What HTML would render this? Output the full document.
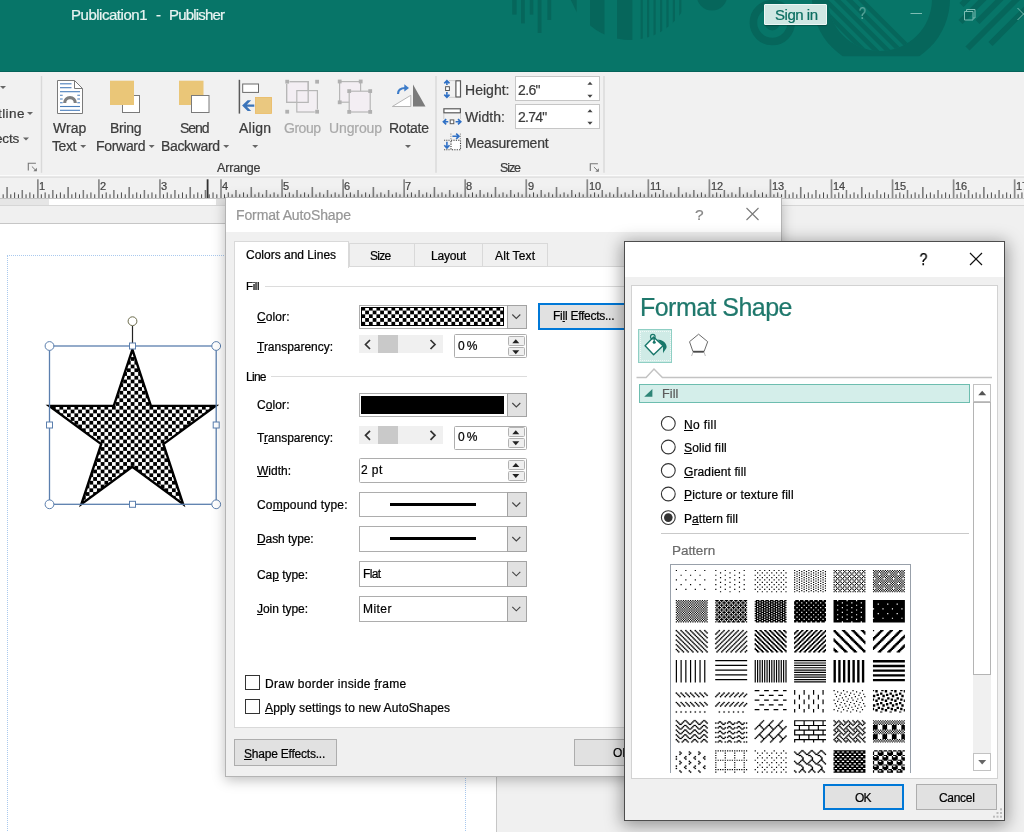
<!DOCTYPE html>
<html>
<head>
<meta charset="utf-8">
<title>Publisher</title>
<style>
*{box-sizing:border-box;margin:0;padding:0}
html,body{width:1024px;height:832px;overflow:hidden;background:#f0f0f0;font-family:"Liberation Sans",sans-serif;font-size:12px;color:#000}
.abs,.t{position:absolute}
.t{white-space:nowrap;line-height:1;will-change:transform;-webkit-text-stroke:.22px currentColor}
u{text-decoration:underline;text-underline-offset:1px;text-decoration-thickness:1px}
#titlebar{position:absolute;left:0;top:0;width:1024px;height:72px;background:#077568;overflow:hidden}
#ribbon{position:absolute;left:0;top:72px;width:1024px;height:103px;background:#f1f1f1;overflow:hidden}
#ruler{position:absolute;left:0;top:175px;width:1024px;height:24px;background:#f1f1f1;overflow:hidden}
#work{position:absolute;left:0;top:199px;width:1024px;height:633px;background:#efefef;overflow:hidden}
#dlg1,#dlg2{position:absolute;left:0;top:0;width:0;height:0}
</style>
</head>
<body>
<div id="titlebar">
<svg class="abs" style="left:0;top:0" width="1024" height="72" viewBox="0 0 1024 72"><defs><clipPath id="cdome"><circle cx="630" cy="-21.7" r="61.7"/></clipPath><clipPath id="cin"><circle cx="880" cy="-1" r="52"/></clipPath><clipPath id="cout"><rect x="800" y="0" width="160" height="56.3"/></clipPath></defs><g fill="#06665b"><rect x="512.2" y="0" width="4.4" height="14.6"/><rect x="521" y="0" width="3.8" height="23.4"/><rect x="529.8" y="0" width="3.5" height="14.6"/><rect x="537.7" y="0" width="3.8" height="33"/><rect x="547.4" y="0" width="3.8" height="20"/><path d="M570.8 0 L576.7 0 L576.7 12.3 Z"/><g clip-path="url(#cdome)"><rect x="590" y="0" width="14.5" height="60"/><rect x="617" y="0" width="15.4" height="60"/><rect x="640.6" y="0" width="2.2" height="60"/><rect x="647" y="0" width="2.2" height="60"/><rect x="653.5" y="0" width="2.2" height="60"/><rect x="660" y="0" width="2.2" height="60"/><rect x="666.4" y="0" width="2.2" height="60"/><rect x="672.8" y="0" width="2.2" height="60"/><rect x="679.2" y="0" width="2.2" height="60"/></g><circle cx="712" cy="-5" r="15.4"/></g><circle cx="772.3" cy="22.6" r="18.9" fill="none" stroke="#06665b" stroke-width="7.6"/><circle cx="772.3" cy="22.6" r="7.8" fill="#06665b"/><g clip-path="url(#cout)"><path fill-rule="evenodd" fill="#06665b" d="M812 -1.2 a69 69 0 1 0 138 0 a69 69 0 1 0 -138 0 Z M828 -1 a52 52 0 1 0 104 0 a52 52 0 1 0 -104 0 Z"/></g><g clip-path="url(#cin)" stroke="#06665b" stroke-width="4.6"><line x1="851.25" y1="-10" x2="931.25" y2="70"/><line x1="839.25" y1="-10" x2="919.25" y2="70"/><line x1="827.25" y1="-10" x2="907.25" y2="70"/><line x1="815.25" y1="-10" x2="895.25" y2="70"/><line x1="803.25" y1="-10" x2="883.25" y2="70"/><line x1="791.25" y1="-10" x2="871.25" y2="70"/><line x1="779.25" y1="-10" x2="859.25" y2="70"/></g><g stroke="#06665b" stroke-width="5.8"><line x1="961.5" y1="5" x2="976.5" y2="-10"/><line x1="960.5" y1="22" x2="992.5" y2="-10"/><line x1="977.5" y1="22" x2="1009.5" y2="-10"/><line x1="967.5" y1="48.5" x2="1026" y2="-10"/><line x1="990.5" y1="44" x2="1044.5" y2="-10"/></g><g fill="none" stroke="#7dbdb3" stroke-width="1"><path d="M910.5 13.5 H922"/><path d="M964.5 11.5 h8.5 v8.5 h-8.5 Z M966.5 11.5 v-2 h8.5 v8.5 h-2"/><path d="M1017.5 8 L1023.5 14 L1017.5 20 M1023.5 14 L1030 8 M1023.5 14 L1030 20"/></g></svg>
<div class="t" style="left:71.00px;top:7.30px;font-size:15.00px;color:#e9f4f2;letter-spacing:-0.475px;">Publication1</div>
<div class="t" style="left:156.20px;top:7.30px;font-size:15.00px;color:#e9f4f2;">-</div>
<div class="t" style="left:169.00px;top:7.30px;font-size:15.00px;color:#e9f4f2;letter-spacing:-0.817px;">Publisher</div>
<div class="abs" style="left:764px;top:4px;width:63px;height:21px;background:#d0e7e3;border:1px solid #eef7f5;border-radius:1px;box-shadow:0 1px 1px rgba(0,0,0,.25)"></div>
<div class="t" style="left:774.50px;top:7.30px;font-size:15.00px;color:#0b6d60;letter-spacing:-0.477px;">Sign in</div>
<div class="t" style="left:857.80px;top:6.46px;font-size:16.00px;color:#58a59a;transform:scaleX(.8);">?</div>
<div class="abs" style="left:0px;top:70.8px;width:1024px;height:1.2px;background:#05635a;"></div>
</div>
<div id="ribbon">
<div class="t" style="left:-2.50px;top:34.57px;font-size:13.50px;color:#3c3c3c;letter-spacing:0.434px;">tline</div>
<div class="t" style="left:-5.00px;top:60.27px;font-size:13.50px;color:#3c3c3c;letter-spacing:-0.153px;">ects</div>
<div class="t" style="left:53.00px;top:48.65px;font-size:14.00px;color:#3c3c3c;letter-spacing:0.035px;">Wrap</div>
<div class="t" style="left:52.00px;top:66.65px;font-size:14.00px;color:#3c3c3c;letter-spacing:-0.392px;">Text</div>
<div class="t" style="left:110.00px;top:48.65px;font-size:14.00px;color:#3c3c3c;letter-spacing:-0.296px;">Bring</div>
<div class="t" style="left:95.70px;top:66.65px;font-size:14.00px;color:#3c3c3c;letter-spacing:-0.308px;">Forward</div>
<div class="t" style="left:180.00px;top:48.65px;font-size:14.00px;color:#3c3c3c;letter-spacing:-1.066px;">Send</div>
<div class="t" style="left:160.70px;top:66.65px;font-size:14.00px;color:#3c3c3c;letter-spacing:-0.353px;">Backward</div>
<div class="t" style="left:239.00px;top:48.65px;font-size:14.00px;color:#3c3c3c;letter-spacing:0.217px;">Align</div>
<div class="t" style="left:283.50px;top:48.65px;font-size:14.00px;color:#a9a9a9;letter-spacing:-0.478px;">Group</div>
<div class="t" style="left:328.50px;top:48.65px;font-size:14.00px;color:#a9a9a9;letter-spacing:-0.117px;">Ungroup</div>
<div class="t" style="left:388.50px;top:48.65px;font-size:14.00px;color:#3c3c3c;letter-spacing:-0.250px;">Rotate</div>
<div class="t" style="left:217.00px;top:90.42px;font-size:12.50px;color:#3c3c3c;letter-spacing:-0.162px;">Arrange</div>
<div class="t" style="left:499.50px;top:90.42px;font-size:12.50px;color:#3c3c3c;letter-spacing:-1.106px;">Size</div>
<div class="t" style="left:465.00px;top:10.65px;font-size:14.00px;color:#3c3c3c;letter-spacing:0.024px;">Height:</div>
<div class="t" style="left:465.00px;top:37.85px;font-size:14.00px;color:#3c3c3c;letter-spacing:0.065px;">Width:</div>
<div class="t" style="left:465.00px;top:63.65px;font-size:14.00px;color:#3c3c3c;letter-spacing:-0.189px;">Measurement</div>
<div class="abs" style="left:514.5px;top:4px;width:85px;height:25px;background:#fff;border:1px solid #c6c6c6;"></div>
<div class="abs" style="left:514.5px;top:31.5px;width:85px;height:25.5px;background:#fff;border:1px solid #c6c6c6;"></div>
<div class="t" style="left:517.50px;top:10.65px;font-size:14.00px;color:#3c3c3c;letter-spacing:-0.644px;">2.6&quot;</div>
<div class="t" style="left:517.50px;top:37.85px;font-size:14.00px;color:#3c3c3c;letter-spacing:-0.754px;">2.74&quot;</div>
<svg class="abs" style="left:0;top:0" width="1024" height="104" viewBox="0 72 1024 104"><path d="M41.5 76 V172.8" stroke="#d9d9d9" stroke-width="1.4"/><path d="M436 76 V172.8" stroke="#d9d9d9" stroke-width="1.4"/><path d="M604 76 V172.8" stroke="#d9d9d9" stroke-width="1.4"/><path d="M0 86 h6 l-3 3 Z" fill="#666"/><path d="M27 112 h6 l-3 3 Z" fill="#666"/><path d="M23 137.5 h6 l-3 3 Z" fill="#666"/><path d="M80.2 145 h6 l-3 3 Z" fill="#666"/><path d="M148.7 145 h6 l-3 3 Z" fill="#666"/><path d="M223.2 145 h6 l-3 3 Z" fill="#666"/><path d="M252.2 145 h6 l-3 3 Z" fill="#666"/><path d="M405 145 h6 l-3 3 Z" fill="#666"/><path d="M587.4 84.8 h5.2 l-2.6 -3 Z" fill="#444"/><path d="M587.4 94.7 h5.2 l-2.6 3 Z" fill="#444"/><path d="M587.4 112.3 h5.2 l-2.6 -3 Z" fill="#444"/><path d="M587.4 121.7 h5.2 l-2.6 3 Z" fill="#444"/><path d="M28.3 170.5 v-7.3 h7.6" fill="none" stroke="#777" stroke-width="1.1"/><path d="M31.9 166.5 l3.2 3.2" fill="none" stroke="#777" stroke-width="1"/><path d="M36.9 171.3 v-3.6 l-3.6 3.6 Z" fill="#777"/><path d="M590.3 171 v-7.3 h7.6" fill="none" stroke="#777" stroke-width="1.1"/><path d="M593.9 167 l3.2 3.2" fill="none" stroke="#777" stroke-width="1"/><path d="M598.9 171.8 v-3.6 l-3.6 3.6 Z" fill="#777"/><path d="M57.5 80.5 H74.5 L82.5 88.5 V113.5 H57.5 Z" fill="#fff" stroke="#7a7a7a" stroke-width="1"/><path d="M74.5 80.5 V88.5 H82.5" fill="none" stroke="#7a7a7a" stroke-width="1"/><path d="M60 83.8 H71.5" stroke="#4a7ebb" stroke-width="1.1"/><path d="M60 87.7 H71.5" stroke="#4a7ebb" stroke-width="1.1"/><path d="M60 91.7 H80" stroke="#4a7ebb" stroke-width="1.1"/><path d="M60 106.5 H80" stroke="#4a7ebb" stroke-width="1.1"/><path d="M60 110.3 H80" stroke="#4a7ebb" stroke-width="1.1"/><path d="M60 95.3 H62.7 M77.3 95.3 H80" stroke="#4a7ebb" stroke-width="1.1"/><path d="M60 99 H62.7 M77.3 99 H80" stroke="#4a7ebb" stroke-width="1.1"/><path d="M60 102.7 H62.7 M77.3 102.7 H80" stroke="#4a7ebb" stroke-width="1.1"/><path d="M63.1 103 a6.9 6.9 0 0 1 13.8 0 h-3.2 a3.7 3.7 0 0 0 -7.4 0 Z" fill="#7f7f7f"/><rect x="122.5" y="95.5" width="17" height="17" fill="#fff" stroke="#7a7a7a"/><rect x="110" y="80.7" width="24" height="24.3" fill="#eac678"/><rect x="179" y="80.7" width="24.5" height="24.3" fill="#eac678"/><rect x="191.5" y="95.5" width="17.5" height="17" fill="#fff" stroke="#7a7a7a"/><path d="M239.4 79.8 V113.6" stroke="#5a5a5a" stroke-width="1.5"/><rect x="242.7" y="84" width="15.8" height="8.4" fill="#fff" stroke="#6a6a6a" stroke-width="1"/><rect x="255.5" y="97.4" width="16" height="16" fill="#eac880" stroke="#eab960" stroke-width=".8"/><path d="M242.1 105.6 L247.6 100.3 H251.2 L247 104.4 H254.3 V106.8 H247 L251.2 110.9 H247.6 Z" fill="#3b74ba"/><rect x="286.6" y="81.6" width="21.6" height="20.8" fill="#f3eef3" stroke="#b7b7b7" stroke-width="1.2"/><rect x="296.8" y="90.6" width="20.6" height="21.4" fill="#f3eef3" fill-opacity=".75" stroke="#b7b7b7" stroke-width="1.2"/><rect x="286.6" y="81.6" width="21.6" height="20.8" fill="none" stroke="#b7b7b7" stroke-width="1.2"/><rect x="284.9" y="79.4" width="4.6" height="4.6" fill="#f1f1f1"/><rect x="285.3" y="79.8" width="3.8" height="3.8" fill="#b0b0b0"/><rect x="314.8" y="79.4" width="4.6" height="4.6" fill="#f1f1f1"/><rect x="315.2" y="79.8" width="3.8" height="3.8" fill="#b0b0b0"/><rect x="284.9" y="109.4" width="4.6" height="4.6" fill="#f1f1f1"/><rect x="285.3" y="109.8" width="3.8" height="3.8" fill="#b0b0b0"/><rect x="314.8" y="109.4" width="4.6" height="4.6" fill="#f1f1f1"/><rect x="315.2" y="109.8" width="3.8" height="3.8" fill="#b0b0b0"/><rect x="339.6" y="81.6" width="21" height="20.6" fill="#f3eef3" stroke="#b7b7b7" stroke-width="1.2"/><rect x="349.2" y="91.2" width="21" height="20.8" fill="#f3eef3" stroke="#b7b7b7" stroke-width="1.2"/><rect x="337.8" y="79.6" width="3.8" height="3.8" fill="#b0b0b0"/><rect x="358.8" y="79.6" width="3.8" height="3.8" fill="#b0b0b0"/><rect x="337.8" y="100.4" width="3.8" height="3.8" fill="#b0b0b0"/><rect x="347.3" y="89.2" width="3.8" height="3.8" fill="#b0b0b0"/><rect x="368.3" y="89.2" width="3.8" height="3.8" fill="#b0b0b0"/><rect x="347.3" y="110" width="3.8" height="3.8" fill="#b0b0b0"/><rect x="368.3" y="110" width="3.8" height="3.8" fill="#b0b0b0"/><path d="M413 84.5 L425.5 106.5 H413 Z" fill="#7b7b7b"/><path d="M410.8 95.3 V106.5 H392.3 Z" fill="#fff" stroke="#b5b5b5" stroke-width="1"/><path d="M398 94 C398 89.5 401.5 88 405.5 88" fill="none" stroke="#3d7cc9" stroke-width="2.1"/><path d="M404.3 84.3 L409 88 L404.3 91.5 Z" fill="#3d7cc9"/><rect x="455.9" y="80.8" width="4.6" height="16.2" fill="#fff" stroke="#5a5a5a" stroke-width="1.2"/><path d="M449.5 80.6 H455 M449.5 97.3 H455" stroke="#aaa" stroke-width="1" stroke-dasharray="1 1"/><path d="M446.9 81 V85 M444.3 83.4 L446.9 80.6 L449.5 83.4 M446.9 92 V97 M444.3 94.6 L446.9 97.4 L449.5 94.6" fill="none" stroke="#2f70c5" stroke-width="1.6"/><rect x="445.6" y="86.7" width="3.8" height="3.8" fill="#fff" stroke="#5a5a5a" stroke-width="1"/><rect x="443.9" y="108.8" width="16.5" height="4" fill="#fff" stroke="#5a5a5a" stroke-width="1.2"/><path d="M443.8 113.5 V119 M460.5 113.5 V119" stroke="#aaa" stroke-width="1" stroke-dasharray="1 1"/><path d="M443.6 121.8 H448.3 M446.2 119.2 L443.4 121.8 L446.2 124.4 M455.6 121.8 H460.6 M458 119.2 L460.8 121.8 L458 124.4" fill="none" stroke="#2f70c5" stroke-width="1.6"/><rect x="450.2" y="119.9" width="3.6" height="3.8" fill="#fff" stroke="#5a5a5a" stroke-width="1"/><rect x="451" y="140.3" width="9.5" height="9.5" fill="#fff" stroke="#333" stroke-width="1.1" stroke-dasharray="1.2 1.2"/><path d="M450.9 133.6 V139.5 M460.4 133.6 V139.5" stroke="#999" stroke-width="1.1" stroke-dasharray="1.2 1"/><path d="M452.4 136.2 H458.6 M456.2 133.6 L459 136.2 L456.2 138.8" fill="none" stroke="#2f70c5" stroke-width="1.6"/><path d="M446.9 141.8 V147.6 M444.3 145.2 L446.9 148 L449.5 145.2" fill="none" stroke="#2f70c5" stroke-width="1.6"/><path d="M444 140.3 H450 M444 149.8 H450" stroke="#555" stroke-width="1.1" stroke-dasharray="1.2 1"/></svg>
</div>
<div id="ruler">
<svg class="abs" style="left:0;top:0" width="1024" height="24" viewBox="0 175 1024 24"><rect x="0" y="175" width="1024" height="1.5" fill="#fbfbfb"/><rect x="0" y="176.4" width="1024" height="1.4" fill="#dedede"/><rect x="-1.16" y="192.4" width="1" height="5.8" fill="#4a4a4a"/><rect x="2.66" y="194.3" width="1" height="3.9" fill="#4a4a4a"/><rect x="6.28" y="187" width="1.6" height="11.2" fill="#7c7c7c"/><rect x="10.29" y="194.3" width="1" height="3.9" fill="#4a4a4a"/><rect x="14.11" y="192.4" width="1" height="5.8" fill="#4a4a4a"/><rect x="17.92" y="194.3" width="1" height="3.9" fill="#4a4a4a"/><rect x="21.54" y="190" width="1.5" height="8.2" fill="#7c7c7c"/><rect x="25.55" y="194.3" width="1" height="3.9" fill="#4a4a4a"/><rect x="29.37" y="192.4" width="1" height="5.8" fill="#4a4a4a"/><rect x="33.18" y="194.3" width="1" height="3.9" fill="#4a4a4a"/><rect x="37.00" y="179.3" width="1.7" height="18.9" fill="#8a8a8a"/><rect x="40.82" y="194.3" width="1" height="3.9" fill="#4a4a4a"/><rect x="44.63" y="192.4" width="1" height="5.8" fill="#4a4a4a"/><rect x="48.45" y="194.3" width="1" height="3.9" fill="#4a4a4a"/><rect x="52.06" y="190" width="1.5" height="8.2" fill="#7c7c7c"/><rect x="56.08" y="194.3" width="1" height="3.9" fill="#4a4a4a"/><rect x="59.89" y="192.4" width="1" height="5.8" fill="#4a4a4a"/><rect x="63.71" y="194.3" width="1" height="3.9" fill="#4a4a4a"/><rect x="67.33" y="187" width="1.6" height="11.2" fill="#7c7c7c"/><rect x="71.34" y="194.3" width="1" height="3.9" fill="#4a4a4a"/><rect x="75.16" y="192.4" width="1" height="5.8" fill="#4a4a4a"/><rect x="78.97" y="194.3" width="1" height="3.9" fill="#4a4a4a"/><rect x="82.59" y="190" width="1.5" height="8.2" fill="#7c7c7c"/><rect x="86.60" y="194.3" width="1" height="3.9" fill="#4a4a4a"/><rect x="90.42" y="192.4" width="1" height="5.8" fill="#4a4a4a"/><rect x="94.23" y="194.3" width="1" height="3.9" fill="#4a4a4a"/><rect x="98.05" y="179.3" width="1.7" height="18.9" fill="#8a8a8a"/><rect x="101.87" y="194.3" width="1" height="3.9" fill="#4a4a4a"/><rect x="105.68" y="192.4" width="1" height="5.8" fill="#4a4a4a"/><rect x="109.50" y="194.3" width="1" height="3.9" fill="#4a4a4a"/><rect x="113.11" y="190" width="1.5" height="8.2" fill="#7c7c7c"/><rect x="117.13" y="194.3" width="1" height="3.9" fill="#4a4a4a"/><rect x="120.94" y="192.4" width="1" height="5.8" fill="#4a4a4a"/><rect x="124.76" y="194.3" width="1" height="3.9" fill="#4a4a4a"/><rect x="128.38" y="187" width="1.6" height="11.2" fill="#7c7c7c"/><rect x="132.39" y="194.3" width="1" height="3.9" fill="#4a4a4a"/><rect x="136.21" y="192.4" width="1" height="5.8" fill="#4a4a4a"/><rect x="140.02" y="194.3" width="1" height="3.9" fill="#4a4a4a"/><rect x="143.64" y="190" width="1.5" height="8.2" fill="#7c7c7c"/><rect x="147.65" y="194.3" width="1" height="3.9" fill="#4a4a4a"/><rect x="151.47" y="192.4" width="1" height="5.8" fill="#4a4a4a"/><rect x="155.28" y="194.3" width="1" height="3.9" fill="#4a4a4a"/><rect x="159.10" y="179.3" width="1.7" height="18.9" fill="#8a8a8a"/><rect x="162.92" y="194.3" width="1" height="3.9" fill="#4a4a4a"/><rect x="166.73" y="192.4" width="1" height="5.8" fill="#4a4a4a"/><rect x="170.55" y="194.3" width="1" height="3.9" fill="#4a4a4a"/><rect x="174.16" y="190" width="1.5" height="8.2" fill="#7c7c7c"/><rect x="178.18" y="194.3" width="1" height="3.9" fill="#4a4a4a"/><rect x="181.99" y="192.4" width="1" height="5.8" fill="#4a4a4a"/><rect x="185.81" y="194.3" width="1" height="3.9" fill="#4a4a4a"/><rect x="189.43" y="187" width="1.6" height="11.2" fill="#7c7c7c"/><rect x="193.44" y="194.3" width="1" height="3.9" fill="#4a4a4a"/><rect x="197.26" y="192.4" width="1" height="5.8" fill="#4a4a4a"/><rect x="201.07" y="194.3" width="1" height="3.9" fill="#4a4a4a"/><rect x="204.69" y="190" width="1.5" height="8.2" fill="#7c7c7c"/><rect x="208.70" y="194.3" width="1" height="3.9" fill="#4a4a4a"/><rect x="212.52" y="192.4" width="1" height="5.8" fill="#4a4a4a"/><rect x="216.33" y="194.3" width="1" height="3.9" fill="#4a4a4a"/><rect x="220.15" y="179.3" width="1.7" height="18.9" fill="#8a8a8a"/><rect x="223.97" y="194.3" width="1" height="3.9" fill="#4a4a4a"/><rect x="227.78" y="192.4" width="1" height="5.8" fill="#4a4a4a"/><rect x="231.60" y="194.3" width="1" height="3.9" fill="#4a4a4a"/><rect x="235.21" y="190" width="1.5" height="8.2" fill="#7c7c7c"/><rect x="239.23" y="194.3" width="1" height="3.9" fill="#4a4a4a"/><rect x="243.04" y="192.4" width="1" height="5.8" fill="#4a4a4a"/><rect x="246.86" y="194.3" width="1" height="3.9" fill="#4a4a4a"/><rect x="250.47" y="187" width="1.6" height="11.2" fill="#7c7c7c"/><rect x="254.49" y="194.3" width="1" height="3.9" fill="#4a4a4a"/><rect x="258.31" y="192.4" width="1" height="5.8" fill="#4a4a4a"/><rect x="262.12" y="194.3" width="1" height="3.9" fill="#4a4a4a"/><rect x="265.74" y="190" width="1.5" height="8.2" fill="#7c7c7c"/><rect x="269.75" y="194.3" width="1" height="3.9" fill="#4a4a4a"/><rect x="273.57" y="192.4" width="1" height="5.8" fill="#4a4a4a"/><rect x="277.38" y="194.3" width="1" height="3.9" fill="#4a4a4a"/><rect x="281.20" y="179.3" width="1.7" height="18.9" fill="#8a8a8a"/><rect x="285.02" y="194.3" width="1" height="3.9" fill="#4a4a4a"/><rect x="288.83" y="192.4" width="1" height="5.8" fill="#4a4a4a"/><rect x="292.65" y="194.3" width="1" height="3.9" fill="#4a4a4a"/><rect x="296.26" y="190" width="1.5" height="8.2" fill="#7c7c7c"/><rect x="300.28" y="194.3" width="1" height="3.9" fill="#4a4a4a"/><rect x="304.09" y="192.4" width="1" height="5.8" fill="#4a4a4a"/><rect x="307.91" y="194.3" width="1" height="3.9" fill="#4a4a4a"/><rect x="311.52" y="187" width="1.6" height="11.2" fill="#7c7c7c"/><rect x="315.54" y="194.3" width="1" height="3.9" fill="#4a4a4a"/><rect x="319.36" y="192.4" width="1" height="5.8" fill="#4a4a4a"/><rect x="323.17" y="194.3" width="1" height="3.9" fill="#4a4a4a"/><rect x="326.79" y="190" width="1.5" height="8.2" fill="#7c7c7c"/><rect x="330.80" y="194.3" width="1" height="3.9" fill="#4a4a4a"/><rect x="334.62" y="192.4" width="1" height="5.8" fill="#4a4a4a"/><rect x="338.43" y="194.3" width="1" height="3.9" fill="#4a4a4a"/><rect x="342.25" y="179.3" width="1.7" height="18.9" fill="#8a8a8a"/><rect x="346.07" y="194.3" width="1" height="3.9" fill="#4a4a4a"/><rect x="349.88" y="192.4" width="1" height="5.8" fill="#4a4a4a"/><rect x="353.70" y="194.3" width="1" height="3.9" fill="#4a4a4a"/><rect x="357.31" y="190" width="1.5" height="8.2" fill="#7c7c7c"/><rect x="361.33" y="194.3" width="1" height="3.9" fill="#4a4a4a"/><rect x="365.14" y="192.4" width="1" height="5.8" fill="#4a4a4a"/><rect x="368.96" y="194.3" width="1" height="3.9" fill="#4a4a4a"/><rect x="372.57" y="187" width="1.6" height="11.2" fill="#7c7c7c"/><rect x="376.59" y="194.3" width="1" height="3.9" fill="#4a4a4a"/><rect x="380.41" y="192.4" width="1" height="5.8" fill="#4a4a4a"/><rect x="384.22" y="194.3" width="1" height="3.9" fill="#4a4a4a"/><rect x="387.84" y="190" width="1.5" height="8.2" fill="#7c7c7c"/><rect x="391.85" y="194.3" width="1" height="3.9" fill="#4a4a4a"/><rect x="395.67" y="192.4" width="1" height="5.8" fill="#4a4a4a"/><rect x="399.48" y="194.3" width="1" height="3.9" fill="#4a4a4a"/><rect x="403.30" y="179.3" width="1.7" height="18.9" fill="#8a8a8a"/><rect x="407.12" y="194.3" width="1" height="3.9" fill="#4a4a4a"/><rect x="410.93" y="192.4" width="1" height="5.8" fill="#4a4a4a"/><rect x="414.75" y="194.3" width="1" height="3.9" fill="#4a4a4a"/><rect x="418.36" y="190" width="1.5" height="8.2" fill="#7c7c7c"/><rect x="422.38" y="194.3" width="1" height="3.9" fill="#4a4a4a"/><rect x="426.19" y="192.4" width="1" height="5.8" fill="#4a4a4a"/><rect x="430.01" y="194.3" width="1" height="3.9" fill="#4a4a4a"/><rect x="433.62" y="187" width="1.6" height="11.2" fill="#7c7c7c"/><rect x="437.64" y="194.3" width="1" height="3.9" fill="#4a4a4a"/><rect x="441.46" y="192.4" width="1" height="5.8" fill="#4a4a4a"/><rect x="445.27" y="194.3" width="1" height="3.9" fill="#4a4a4a"/><rect x="448.89" y="190" width="1.5" height="8.2" fill="#7c7c7c"/><rect x="452.90" y="194.3" width="1" height="3.9" fill="#4a4a4a"/><rect x="456.72" y="192.4" width="1" height="5.8" fill="#4a4a4a"/><rect x="460.53" y="194.3" width="1" height="3.9" fill="#4a4a4a"/><rect x="464.35" y="179.3" width="1.7" height="18.9" fill="#8a8a8a"/><rect x="468.17" y="194.3" width="1" height="3.9" fill="#4a4a4a"/><rect x="471.98" y="192.4" width="1" height="5.8" fill="#4a4a4a"/><rect x="475.80" y="194.3" width="1" height="3.9" fill="#4a4a4a"/><rect x="479.41" y="190" width="1.5" height="8.2" fill="#7c7c7c"/><rect x="483.43" y="194.3" width="1" height="3.9" fill="#4a4a4a"/><rect x="487.24" y="192.4" width="1" height="5.8" fill="#4a4a4a"/><rect x="491.06" y="194.3" width="1" height="3.9" fill="#4a4a4a"/><rect x="494.68" y="187" width="1.6" height="11.2" fill="#7c7c7c"/><rect x="498.69" y="194.3" width="1" height="3.9" fill="#4a4a4a"/><rect x="502.51" y="192.4" width="1" height="5.8" fill="#4a4a4a"/><rect x="506.32" y="194.3" width="1" height="3.9" fill="#4a4a4a"/><rect x="509.94" y="190" width="1.5" height="8.2" fill="#7c7c7c"/><rect x="513.95" y="194.3" width="1" height="3.9" fill="#4a4a4a"/><rect x="517.77" y="192.4" width="1" height="5.8" fill="#4a4a4a"/><rect x="521.58" y="194.3" width="1" height="3.9" fill="#4a4a4a"/><rect x="525.40" y="179.3" width="1.7" height="18.9" fill="#8a8a8a"/><rect x="529.22" y="194.3" width="1" height="3.9" fill="#4a4a4a"/><rect x="533.03" y="192.4" width="1" height="5.8" fill="#4a4a4a"/><rect x="536.85" y="194.3" width="1" height="3.9" fill="#4a4a4a"/><rect x="540.46" y="190" width="1.5" height="8.2" fill="#7c7c7c"/><rect x="544.48" y="194.3" width="1" height="3.9" fill="#4a4a4a"/><rect x="548.29" y="192.4" width="1" height="5.8" fill="#4a4a4a"/><rect x="552.11" y="194.3" width="1" height="3.9" fill="#4a4a4a"/><rect x="555.72" y="187" width="1.6" height="11.2" fill="#7c7c7c"/><rect x="559.74" y="194.3" width="1" height="3.9" fill="#4a4a4a"/><rect x="563.56" y="192.4" width="1" height="5.8" fill="#4a4a4a"/><rect x="567.37" y="194.3" width="1" height="3.9" fill="#4a4a4a"/><rect x="570.99" y="190" width="1.5" height="8.2" fill="#7c7c7c"/><rect x="575.00" y="194.3" width="1" height="3.9" fill="#4a4a4a"/><rect x="578.82" y="192.4" width="1" height="5.8" fill="#4a4a4a"/><rect x="582.63" y="194.3" width="1" height="3.9" fill="#4a4a4a"/><rect x="586.45" y="179.3" width="1.7" height="18.9" fill="#8a8a8a"/><rect x="590.27" y="194.3" width="1" height="3.9" fill="#4a4a4a"/><rect x="594.08" y="192.4" width="1" height="5.8" fill="#4a4a4a"/><rect x="597.90" y="194.3" width="1" height="3.9" fill="#4a4a4a"/><rect x="601.51" y="190" width="1.5" height="8.2" fill="#7c7c7c"/><rect x="605.53" y="194.3" width="1" height="3.9" fill="#4a4a4a"/><rect x="609.34" y="192.4" width="1" height="5.8" fill="#4a4a4a"/><rect x="613.16" y="194.3" width="1" height="3.9" fill="#4a4a4a"/><rect x="616.77" y="187" width="1.6" height="11.2" fill="#7c7c7c"/><rect x="620.79" y="194.3" width="1" height="3.9" fill="#4a4a4a"/><rect x="624.61" y="192.4" width="1" height="5.8" fill="#4a4a4a"/><rect x="628.42" y="194.3" width="1" height="3.9" fill="#4a4a4a"/><rect x="632.04" y="190" width="1.5" height="8.2" fill="#7c7c7c"/><rect x="636.05" y="194.3" width="1" height="3.9" fill="#4a4a4a"/><rect x="639.87" y="192.4" width="1" height="5.8" fill="#4a4a4a"/><rect x="643.68" y="194.3" width="1" height="3.9" fill="#4a4a4a"/><rect x="647.50" y="179.3" width="1.7" height="18.9" fill="#8a8a8a"/><rect x="651.32" y="194.3" width="1" height="3.9" fill="#4a4a4a"/><rect x="655.13" y="192.4" width="1" height="5.8" fill="#4a4a4a"/><rect x="658.95" y="194.3" width="1" height="3.9" fill="#4a4a4a"/><rect x="662.56" y="190" width="1.5" height="8.2" fill="#7c7c7c"/><rect x="666.58" y="194.3" width="1" height="3.9" fill="#4a4a4a"/><rect x="670.39" y="192.4" width="1" height="5.8" fill="#4a4a4a"/><rect x="674.21" y="194.3" width="1" height="3.9" fill="#4a4a4a"/><rect x="677.82" y="187" width="1.6" height="11.2" fill="#7c7c7c"/><rect x="681.84" y="194.3" width="1" height="3.9" fill="#4a4a4a"/><rect x="685.66" y="192.4" width="1" height="5.8" fill="#4a4a4a"/><rect x="689.47" y="194.3" width="1" height="3.9" fill="#4a4a4a"/><rect x="693.09" y="190" width="1.5" height="8.2" fill="#7c7c7c"/><rect x="697.10" y="194.3" width="1" height="3.9" fill="#4a4a4a"/><rect x="700.92" y="192.4" width="1" height="5.8" fill="#4a4a4a"/><rect x="704.73" y="194.3" width="1" height="3.9" fill="#4a4a4a"/><rect x="708.55" y="179.3" width="1.7" height="18.9" fill="#8a8a8a"/><rect x="712.37" y="194.3" width="1" height="3.9" fill="#4a4a4a"/><rect x="716.18" y="192.4" width="1" height="5.8" fill="#4a4a4a"/><rect x="720.00" y="194.3" width="1" height="3.9" fill="#4a4a4a"/><rect x="723.61" y="190" width="1.5" height="8.2" fill="#7c7c7c"/><rect x="727.63" y="194.3" width="1" height="3.9" fill="#4a4a4a"/><rect x="731.44" y="192.4" width="1" height="5.8" fill="#4a4a4a"/><rect x="735.26" y="194.3" width="1" height="3.9" fill="#4a4a4a"/><rect x="738.87" y="187" width="1.6" height="11.2" fill="#7c7c7c"/><rect x="742.89" y="194.3" width="1" height="3.9" fill="#4a4a4a"/><rect x="746.71" y="192.4" width="1" height="5.8" fill="#4a4a4a"/><rect x="750.52" y="194.3" width="1" height="3.9" fill="#4a4a4a"/><rect x="754.14" y="190" width="1.5" height="8.2" fill="#7c7c7c"/><rect x="758.15" y="194.3" width="1" height="3.9" fill="#4a4a4a"/><rect x="761.97" y="192.4" width="1" height="5.8" fill="#4a4a4a"/><rect x="765.78" y="194.3" width="1" height="3.9" fill="#4a4a4a"/><rect x="769.60" y="179.3" width="1.7" height="18.9" fill="#8a8a8a"/><rect x="773.42" y="194.3" width="1" height="3.9" fill="#4a4a4a"/><rect x="777.23" y="192.4" width="1" height="5.8" fill="#4a4a4a"/><rect x="781.05" y="194.3" width="1" height="3.9" fill="#4a4a4a"/><rect x="784.66" y="190" width="1.5" height="8.2" fill="#7c7c7c"/><rect x="788.68" y="194.3" width="1" height="3.9" fill="#4a4a4a"/><rect x="792.49" y="192.4" width="1" height="5.8" fill="#4a4a4a"/><rect x="796.31" y="194.3" width="1" height="3.9" fill="#4a4a4a"/><rect x="799.92" y="187" width="1.6" height="11.2" fill="#7c7c7c"/><rect x="803.94" y="194.3" width="1" height="3.9" fill="#4a4a4a"/><rect x="807.76" y="192.4" width="1" height="5.8" fill="#4a4a4a"/><rect x="811.57" y="194.3" width="1" height="3.9" fill="#4a4a4a"/><rect x="815.19" y="190" width="1.5" height="8.2" fill="#7c7c7c"/><rect x="819.20" y="194.3" width="1" height="3.9" fill="#4a4a4a"/><rect x="823.02" y="192.4" width="1" height="5.8" fill="#4a4a4a"/><rect x="826.83" y="194.3" width="1" height="3.9" fill="#4a4a4a"/><rect x="830.65" y="179.3" width="1.7" height="18.9" fill="#8a8a8a"/><rect x="834.47" y="194.3" width="1" height="3.9" fill="#4a4a4a"/><rect x="838.28" y="192.4" width="1" height="5.8" fill="#4a4a4a"/><rect x="842.10" y="194.3" width="1" height="3.9" fill="#4a4a4a"/><rect x="845.71" y="190" width="1.5" height="8.2" fill="#7c7c7c"/><rect x="849.73" y="194.3" width="1" height="3.9" fill="#4a4a4a"/><rect x="853.54" y="192.4" width="1" height="5.8" fill="#4a4a4a"/><rect x="857.36" y="194.3" width="1" height="3.9" fill="#4a4a4a"/><rect x="860.97" y="187" width="1.6" height="11.2" fill="#7c7c7c"/><rect x="864.99" y="194.3" width="1" height="3.9" fill="#4a4a4a"/><rect x="868.81" y="192.4" width="1" height="5.8" fill="#4a4a4a"/><rect x="872.62" y="194.3" width="1" height="3.9" fill="#4a4a4a"/><rect x="876.24" y="190" width="1.5" height="8.2" fill="#7c7c7c"/><rect x="880.25" y="194.3" width="1" height="3.9" fill="#4a4a4a"/><rect x="884.07" y="192.4" width="1" height="5.8" fill="#4a4a4a"/><rect x="887.88" y="194.3" width="1" height="3.9" fill="#4a4a4a"/><rect x="891.70" y="179.3" width="1.7" height="18.9" fill="#8a8a8a"/><rect x="895.52" y="194.3" width="1" height="3.9" fill="#4a4a4a"/><rect x="899.33" y="192.4" width="1" height="5.8" fill="#4a4a4a"/><rect x="903.15" y="194.3" width="1" height="3.9" fill="#4a4a4a"/><rect x="906.76" y="190" width="1.5" height="8.2" fill="#7c7c7c"/><rect x="910.78" y="194.3" width="1" height="3.9" fill="#4a4a4a"/><rect x="914.59" y="192.4" width="1" height="5.8" fill="#4a4a4a"/><rect x="918.41" y="194.3" width="1" height="3.9" fill="#4a4a4a"/><rect x="922.02" y="187" width="1.6" height="11.2" fill="#7c7c7c"/><rect x="926.04" y="194.3" width="1" height="3.9" fill="#4a4a4a"/><rect x="929.86" y="192.4" width="1" height="5.8" fill="#4a4a4a"/><rect x="933.67" y="194.3" width="1" height="3.9" fill="#4a4a4a"/><rect x="937.29" y="190" width="1.5" height="8.2" fill="#7c7c7c"/><rect x="941.30" y="194.3" width="1" height="3.9" fill="#4a4a4a"/><rect x="945.12" y="192.4" width="1" height="5.8" fill="#4a4a4a"/><rect x="948.93" y="194.3" width="1" height="3.9" fill="#4a4a4a"/><rect x="952.75" y="179.3" width="1.7" height="18.9" fill="#8a8a8a"/><rect x="956.57" y="194.3" width="1" height="3.9" fill="#4a4a4a"/><rect x="960.38" y="192.4" width="1" height="5.8" fill="#4a4a4a"/><rect x="964.20" y="194.3" width="1" height="3.9" fill="#4a4a4a"/><rect x="967.81" y="190" width="1.5" height="8.2" fill="#7c7c7c"/><rect x="971.83" y="194.3" width="1" height="3.9" fill="#4a4a4a"/><rect x="975.64" y="192.4" width="1" height="5.8" fill="#4a4a4a"/><rect x="979.46" y="194.3" width="1" height="3.9" fill="#4a4a4a"/><rect x="983.07" y="187" width="1.6" height="11.2" fill="#7c7c7c"/><rect x="987.09" y="194.3" width="1" height="3.9" fill="#4a4a4a"/><rect x="990.91" y="192.4" width="1" height="5.8" fill="#4a4a4a"/><rect x="994.72" y="194.3" width="1" height="3.9" fill="#4a4a4a"/><rect x="998.34" y="190" width="1.5" height="8.2" fill="#7c7c7c"/><rect x="1002.35" y="194.3" width="1" height="3.9" fill="#4a4a4a"/><rect x="1006.17" y="192.4" width="1" height="5.8" fill="#4a4a4a"/><rect x="1009.98" y="194.3" width="1" height="3.9" fill="#4a4a4a"/><rect x="1013.80" y="179.3" width="1.7" height="18.9" fill="#8a8a8a"/><rect x="1017.62" y="194.3" width="1" height="3.9" fill="#4a4a4a"/><rect x="1021.43" y="192.4" width="1" height="5.8" fill="#4a4a4a"/><rect x="1025.25" y="194.3" width="1" height="3.9" fill="#4a4a4a"/><rect x="1028.86" y="190" width="1.5" height="8.2" fill="#7c7c7c"/><rect x="206.7" y="179.3" width="1.8" height="19" fill="#333"/><rect x="0" y="198" width="1024" height="1" fill="#c3c3c3"/></svg>
<div class="t" style="left:39.10px;top:6.29px;font-size:11.00px;color:#444;">1</div>
<div class="t" style="left:100.15px;top:6.29px;font-size:11.00px;color:#444;">2</div>
<div class="t" style="left:161.20px;top:6.29px;font-size:11.00px;color:#444;">3</div>
<div class="t" style="left:222.25px;top:6.29px;font-size:11.00px;color:#444;">4</div>
<div class="t" style="left:283.30px;top:6.29px;font-size:11.00px;color:#444;">5</div>
<div class="t" style="left:344.35px;top:6.29px;font-size:11.00px;color:#444;">6</div>
<div class="t" style="left:405.40px;top:6.29px;font-size:11.00px;color:#444;">7</div>
<div class="t" style="left:466.45px;top:6.29px;font-size:11.00px;color:#444;">8</div>
<div class="t" style="left:527.50px;top:6.29px;font-size:11.00px;color:#444;">9</div>
<div class="t" style="left:588.55px;top:6.29px;font-size:11.00px;color:#444;">10</div>
<div class="t" style="left:649.60px;top:6.29px;font-size:11.00px;color:#444;">11</div>
<div class="t" style="left:710.65px;top:6.29px;font-size:11.00px;color:#444;">12</div>
<div class="t" style="left:771.70px;top:6.29px;font-size:11.00px;color:#444;">13</div>
<div class="t" style="left:832.75px;top:6.29px;font-size:11.00px;color:#444;">14</div>
<div class="t" style="left:893.80px;top:6.29px;font-size:11.00px;color:#444;">15</div>
<div class="t" style="left:954.85px;top:6.29px;font-size:11.00px;color:#444;">16</div>
<div class="t" style="left:1015.90px;top:6.29px;font-size:11.00px;color:#444;">17</div>
</div>
<div id="work">
<div class="abs" style="left:0px;top:0px;width:1024px;height:5.5px;background:#f4f4f4;"></div>
<div class="abs" style="left:0px;top:0px;width:49px;height:5.5px;background:#e6e6e6;"></div>
<div class="abs" style="left:49px;top:0px;width:167px;height:5.5px;background:#fff;"></div>
<div class="abs" style="left:216px;top:0px;width:10px;height:5.5px;background:#e2e2e2;"></div>
<div class="abs" style="left:0px;top:5.5px;width:1024px;height:1px;background:#d6d6d6;"></div>
<div class="abs" style="left:0px;top:6.5px;width:1024px;height:626px;background:#f0f0f0;"></div>
<div class="abs" style="left:-2px;top:24px;width:499px;height:640px;background:#fff;border:1px solid #c6c6c6;"></div>
<div class="abs" style="left:6.5px;top:56px;width:1px;height:600px;border-left:1px dotted #a9c9ee"></div>
<div class="abs" style="left:465px;top:56px;width:1px;height:600px;border-left:1px dotted #a9c9ee"></div>
<div class="abs" style="left:6.5px;top:56px;width:459px;height:1px;border-top:1px dotted #a9c9ee"></div>
<svg class="abs" style="left:0;top:0" width="260" height="633" viewBox="0 199 260 633"><defs><pattern id="chk" x="3.2" y="4.6" width="7.5" height="7.5" patternUnits="userSpaceOnUse"><rect width="7.5" height="7.5" fill="#fff"/><rect x="0" y="0" width="3.75" height="3.75" fill="#000"/><rect x="3.75" y="3.75" width="3.75" height="3.75" fill="#000"/></pattern></defs><polygon points="132.4,349.6 150.9,405.9 215.5,405.9 163.4,444.1 183.1,504.1 132.3,466.8 81.4,504.1 101.2,444.1 49.2,405.9 113.8,405.9" fill="url(#chk)" stroke="#000" stroke-width="2.4" stroke-linejoin="miter"/><rect x="49.5" y="346" width="166.7" height="158.3" fill="none" stroke="#5b7fae" stroke-width="1.3"/><path d="M132.5 326 V346" stroke="#222" stroke-width="1.2"/><circle cx="132.5" cy="321.2" r="4.4" fill="#fff" stroke="#6b6b4b" stroke-width="1"/><circle cx="49.5" cy="346" r="4.4" fill="#fff" stroke="#5b7fae" stroke-width="1"/><circle cx="216.2" cy="346" r="4.4" fill="#fff" stroke="#5b7fae" stroke-width="1"/><circle cx="49.5" cy="504.3" r="4.4" fill="#fff" stroke="#5b7fae" stroke-width="1"/><circle cx="216.2" cy="504.3" r="4.4" fill="#fff" stroke="#5b7fae" stroke-width="1"/><rect x="129.5" y="343" width="6" height="6" fill="#fff" stroke="#5b7fae" stroke-width="1"/><rect x="129.5" y="501.3" width="6" height="6" fill="#fff" stroke="#5b7fae" stroke-width="1"/><rect x="46.5" y="422" width="6" height="6" fill="#fff" stroke="#5b7fae" stroke-width="1"/><rect x="213.2" y="422" width="6" height="6" fill="#fff" stroke="#5b7fae" stroke-width="1"/></svg>
</div>
<div id="dlg1">
<div class="abs" style="left:225px;top:197px;width:557px;height:579.7px;background:#f0f0f0;border:1px solid #b4b4b4;box-shadow:0 3px 12px rgba(0,0,0,.26)"></div>
<div class="abs" style="left:226px;top:198px;width:555px;height:34px;background:#fff;"></div>
<div class="t" style="left:235.50px;top:208.15px;font-size:14.00px;color:#969696;letter-spacing:-0.116px;">Format AutoShape</div>
<div class="t" style="left:694.80px;top:206.58px;font-size:15.50px;color:#858585;">?</div>
<div class="abs" style="left:233.5px;top:266px;width:539px;height:461.5px;background:#fff;border:1px solid #d9d9d9;"></div>
<div class="abs" style="left:348.5px;top:243px;width:66.5px;height:23.5px;background:#f0f0f0;border:1px solid #d9d9d9;"></div>
<div class="abs" style="left:414px;top:243px;width:68.5px;height:23.5px;background:#f0f0f0;border:1px solid #d9d9d9;"></div>
<div class="abs" style="left:481.5px;top:243px;width:66.5px;height:23.5px;background:#f0f0f0;border:1px solid #d9d9d9;"></div>
<div class="abs" style="left:234px;top:241px;width:115px;height:26.5px;background:#fff;border:1px solid #d9d9d9;border-bottom:none"></div>
<div class="t" style="left:245.50px;top:249.34px;font-size:12.00px;color:#000;">Colors and Lines</div>
<div class="t" style="left:370.00px;top:250.34px;font-size:12.00px;color:#000;letter-spacing:-0.715px;">Size</div>
<div class="t" style="left:431.00px;top:250.34px;font-size:12.00px;color:#000;letter-spacing:-0.166px;">Layout</div>
<div class="t" style="left:495.00px;top:250.34px;font-size:12.00px;color:#000;letter-spacing:0.124px;">Alt Text</div>
<div class="t" style="left:245.50px;top:281.27px;font-size:11.50px;color:#000;letter-spacing:-0.363px;">Fill</div>
<div class="abs" style="left:264.5px;top:285.5px;width:500px;height:1px;background:#dcdcdc;"></div>
<div class="t" style="left:256.50px;top:310.84px;font-size:12.00px;color:#000;letter-spacing:0.098px;"><u>C</u>olor:</div>
<div class="abs" style="left:358.5px;top:304.5px;width:168px;height:24px;background:#fff;border:1px solid #adadad;"></div><div class="abs" style="left:507px;top:304.5px;width:19.5px;height:24px;background:#e1e1e1;border:1px solid #a3a3a3;"></div>
<div class="abs" style="left:361px;top:307px;width:142.7px;height:19px;background-color:#fff;background-image:conic-gradient(#000 25%,#fff 0 50%,#000 0 75%,#fff 0);background-size:7.5px 7.5px;background-position:3.2px -1.2px;border:1px solid #000"></div>
<div class="t" style="left:256.50px;top:341.04px;font-size:12.00px;color:#000;letter-spacing:-0.021px;"><u>T</u>ransparency:</div>
<div class="abs" style="left:358.7px;top:335.2px;width:84px;height:18px;background:#f0f0f0;"></div>
<div class="abs" style="left:378px;top:335.2px;width:20px;height:18px;background:#c9c9c9;"></div>
<div class="abs" style="left:454px;top:334.3px;width:72.5px;height:24px;background:#fff;border:1px solid #adadad;border-radius:1.5px"></div><div class="abs" style="left:507.5px;top:336.1px;width:17.3px;height:9.9px;background:#efefef;border:1px solid #b2b2b2;border-radius:1.5px"></div><div class="abs" style="left:507.5px;top:346.6px;width:17.3px;height:9.9px;background:#efefef;border:1px solid #b2b2b2;border-radius:1.5px"></div>
<div class="t" style="left:457.50px;top:339.84px;font-size:12.00px;color:#000;letter-spacing:-0.589px;">0 %</div>
<div class="abs" style="left:538px;top:302.5px;width:100px;height:27px;background:#e1e1e1;border:2px solid #0078d7;"></div>
<div class="t" style="left:553.00px;top:310.34px;font-size:12.00px;color:#000;letter-spacing:-0.259px;">Fi<u>l</u>l Effects...</div>
<div class="t" style="left:245.50px;top:370.84px;font-size:12.00px;color:#000;letter-spacing:-0.729px;">Line</div>
<div class="abs" style="left:271px;top:375.5px;width:255.5px;height:1px;background:#dcdcdc;"></div>
<div class="t" style="left:256.50px;top:399.34px;font-size:12.00px;color:#000;letter-spacing:0.098px;">C<u>o</u>lor:</div>
<div class="abs" style="left:358.5px;top:393px;width:168px;height:24px;background:#fff;border:1px solid #adadad;"></div><div class="abs" style="left:507px;top:393px;width:19.5px;height:24px;background:#e1e1e1;border:1px solid #a3a3a3;"></div>
<div class="abs" style="left:361px;top:395.5px;width:142.7px;height:18.2px;background:#000;"></div>
<div class="t" style="left:256.50px;top:431.84px;font-size:12.00px;color:#000;letter-spacing:-0.021px;">T<u>r</u>ansparency:</div>
<div class="abs" style="left:358.7px;top:426.2px;width:84px;height:18.3px;background:#f0f0f0;"></div>
<div class="abs" style="left:378px;top:426.2px;width:20px;height:18.3px;background:#c9c9c9;"></div>
<div class="abs" style="left:454px;top:425.5px;width:72.5px;height:24px;background:#fff;border:1px solid #adadad;border-radius:1.5px"></div><div class="abs" style="left:507.5px;top:427.3px;width:17.3px;height:9.9px;background:#efefef;border:1px solid #b2b2b2;border-radius:1.5px"></div><div class="abs" style="left:507.5px;top:437.8px;width:17.3px;height:9.9px;background:#efefef;border:1px solid #b2b2b2;border-radius:1.5px"></div>
<div class="t" style="left:457.50px;top:431.04px;font-size:12.00px;color:#000;letter-spacing:-0.589px;">0 %</div>
<div class="t" style="left:256.50px;top:464.84px;font-size:12.00px;color:#000;"><u>W</u>idth:</div>
<div class="abs" style="left:358.5px;top:458.3px;width:168px;height:24.6px;background:#fff;border:1px solid #adadad;border-radius:1.5px"></div><div class="abs" style="left:507.5px;top:460.1px;width:17.3px;height:10.2px;background:#efefef;border:1px solid #b2b2b2;border-radius:1.5px"></div><div class="abs" style="left:507.5px;top:470.9px;width:17.3px;height:10.2px;background:#efefef;border:1px solid #b2b2b2;border-radius:1.5px"></div>
<div class="t" style="left:361.20px;top:463.54px;font-size:12.00px;color:#000;letter-spacing:0.428px;">2 pt</div>
<div class="t" style="left:256.50px;top:498.54px;font-size:12.00px;color:#000;letter-spacing:0.188px;">Co<u>m</u>pound type:</div>
<div class="abs" style="left:358.5px;top:491.5px;width:168px;height:25.5px;background:#fff;border:1px solid #adadad;"></div><div class="abs" style="left:507px;top:491.5px;width:19.5px;height:25.5px;background:#e1e1e1;border:1px solid #a3a3a3;"></div>
<div class="abs" style="left:389.5px;top:503px;width:86.7px;height:2.5px;background:#000;"></div>
<div class="t" style="left:256.50px;top:533.04px;font-size:12.00px;color:#000;letter-spacing:-0.074px;"><u>D</u>ash type:</div>
<div class="abs" style="left:358.5px;top:526.3px;width:168px;height:25.5px;background:#fff;border:1px solid #adadad;"></div><div class="abs" style="left:507px;top:526.3px;width:19.5px;height:25.5px;background:#e1e1e1;border:1px solid #a3a3a3;"></div>
<div class="abs" style="left:389.5px;top:537px;width:86.7px;height:2.5px;background:#000;"></div>
<div class="t" style="left:256.50px;top:568.54px;font-size:12.00px;color:#000;letter-spacing:-0.045px;">Ca<u>p</u> type:</div>
<div class="abs" style="left:358.5px;top:561px;width:168px;height:25.5px;background:#fff;border:1px solid #adadad;"></div><div class="abs" style="left:507px;top:561px;width:19.5px;height:25.5px;background:#e1e1e1;border:1px solid #a3a3a3;"></div>
<div class="t" style="left:362.50px;top:568.04px;font-size:12.00px;color:#000;letter-spacing:-0.601px;">Flat</div>
<div class="t" style="left:256.50px;top:603.34px;font-size:12.00px;color:#000;letter-spacing:-0.040px;"><u>J</u>oin type:</div>
<div class="abs" style="left:358.5px;top:596px;width:168px;height:25.5px;background:#fff;border:1px solid #adadad;"></div><div class="abs" style="left:507px;top:596px;width:19.5px;height:25.5px;background:#e1e1e1;border:1px solid #a3a3a3;"></div>
<div class="t" style="left:362.50px;top:603.14px;font-size:12.00px;color:#000;letter-spacing:0.458px;">Miter</div>
<div class="abs" style="left:245px;top:675px;width:15px;height:15px;background:#fff;border:1px solid #333;"></div>
<div class="t" style="left:265.00px;top:678.04px;font-size:12.00px;color:#000;letter-spacing:0.282px;">Draw border inside <u>f</u>rame</div>
<div class="abs" style="left:245px;top:698.7px;width:15px;height:15px;background:#fff;border:1px solid #333;"></div>
<div class="t" style="left:265.00px;top:701.54px;font-size:12.00px;color:#000;letter-spacing:0.114px;"><u>A</u>pply settings to new AutoShapes</div>
<div class="abs" style="left:234px;top:739px;width:103px;height:27px;background:#e1e1e1;border:1px solid #adadad;"></div>
<div class="t" style="left:244.20px;top:747.84px;font-size:12.00px;color:#000;letter-spacing:-0.213px;"><u>S</u>hape Effects...</div>
<div class="abs" style="left:574px;top:739px;width:90px;height:27px;background:#e1e1e1;border:1px solid #adadad;"></div>
<div class="t" style="left:612.50px;top:747.34px;font-size:12.00px;color:#000;">OK</div>
<svg class="abs" style="left:0;top:0;overflow:visible" width="1024" height="832" viewBox="0 0 1024 832"><path d="M746.5 208 l12 12 m0 -12 l-12 12" stroke="#7a7a7a" stroke-width="1.1" fill="none"/><path d="M512.3 314.5 l4 4 l4 -4" fill="none" stroke="#444" stroke-width="1.1"/><path d="M512.3 403 l4 4 l4 -4" fill="none" stroke="#444" stroke-width="1.1"/><path d="M512.3 502.5 l4 4 l4 -4" fill="none" stroke="#444" stroke-width="1.1"/><path d="M512.3 537 l4 4 l4 -4" fill="none" stroke="#444" stroke-width="1.1"/><path d="M512.3 571.8 l4 4 l4 -4" fill="none" stroke="#444" stroke-width="1.1"/><path d="M512.3 606.8 l4 4 l4 -4" fill="none" stroke="#444" stroke-width="1.1"/><path d="M370 340 l-4.5 4.5 l4.5 4.5" fill="none" stroke="#333" stroke-width="1.7"/><path d="M430.5 340 l4.5 4.5 l-4.5 4.5" fill="none" stroke="#333" stroke-width="1.7"/><path d="M370 430.8 l-4.5 4.5 l4.5 4.5" fill="none" stroke="#333" stroke-width="1.7"/><path d="M430.5 430.8 l4.5 4.5 l-4.5 4.5" fill="none" stroke="#333" stroke-width="1.7"/><path d="M512.3 343.3 h7 l-3.5 -4 Z" fill="#222"/><path d="M512.3 350.2 h7 l-3.5 4 Z" fill="#222"/><path d="M512.3 434.3 h7 l-3.5 -4 Z" fill="#222"/><path d="M512.3 441.2 h7 l-3.5 4 Z" fill="#222"/><path d="M512.3 467.1 h7 l-3.5 -4 Z" fill="#222"/><path d="M512.3 474 h7 l-3.5 4 Z" fill="#222"/></svg>
</div>
<div id="dlg2">
<div class="abs" style="left:624px;top:241px;width:380.6px;height:579.5px;background:#f0f0f0;border:1px solid #4d4d4d;box-shadow:0 3px 16px 2px rgba(0,0,0,.38)"></div>
<div class="abs" style="left:625px;top:242px;width:378.6px;height:35px;background:#fff;"></div>
<div class="t" style="left:918.60px;top:252.36px;font-size:16.00px;color:#000;transform:scaleX(.86);-webkit-text-stroke:.25px #000;">?</div>
<div class="abs" style="left:631px;top:285px;width:367px;height:494px;background:#fff;border:1px solid #d2d2d2;"></div>
<div class="t" style="left:640.00px;top:295.14px;font-size:25.00px;color:#1f786c;letter-spacing:-0.537px;">Format Shape</div>
<div class="abs" style="left:638px;top:329px;width:34px;height:33.5px;background:#cfebe6;border:1px solid #8fcfc4;"></div>
<div class="abs" style="left:639.5px;top:330.5px;width:31px;height:30.5px;border:1px dotted rgba(255,255,255,.7);"></div>
<div class="abs" style="left:639px;top:384px;width:331px;height:19px;background:#d4eeea;border:1px solid #6dbdaf;"></div>
<div class="t" style="left:662.40px;top:387.75px;font-size:12.70px;color:#5a5a5a;letter-spacing:0.059px;">Fill</div>
<div class="t" style="left:683.70px;top:418.64px;font-size:12.00px;color:#000;letter-spacing:0.382px;"><u>N</u>o fill</div>
<div class="t" style="left:683.70px;top:442.44px;font-size:12.00px;color:#000;letter-spacing:0.139px;"><u>S</u>olid fill</div>
<div class="t" style="left:683.70px;top:465.74px;font-size:12.00px;color:#000;letter-spacing:0.117px;"><u>G</u>radient fill</div>
<div class="t" style="left:683.70px;top:489.14px;font-size:12.00px;color:#000;letter-spacing:0.162px;"><u>P</u>icture or texture fill</div>
<div class="t" style="left:683.70px;top:512.64px;font-size:12.00px;color:#000;letter-spacing:0.040px;">P<u>a</u>ttern fill</div>
<div class="abs" style="left:661px;top:533px;width:308px;height:1px;background:#c9c9c9;"></div>
<div class="t" style="left:671.50px;top:544.17px;font-size:13.50px;color:#6a6a6a;letter-spacing:-0.054px;">Pattern</div>
<div class="abs" style="left:670px;top:564px;width:241px;height:209px;background:#fff;border:1px solid #98a0aa;border-bottom:none"></div>
<div class="abs" style="left:973px;top:384px;width:18.3px;height:387px;background:#f0f0f0;"></div>
<div class="abs" style="left:973px;top:384px;width:18.3px;height:18px;background:#fff;border:1px solid #c2c2c2;"></div>
<div class="abs" style="left:973px;top:401.5px;width:18.3px;height:273px;background:#fff;border:1px solid #b4b4b4;"></div>
<div class="abs" style="left:973px;top:753px;width:18.3px;height:18px;background:#fff;border:1px solid #c2c2c2;"></div>
<div class="abs" style="left:823px;top:784.3px;width:80.7px;height:26px;background:#e1e1e1;border:2px solid #0078d7;"></div>
<div class="t" style="left:855.20px;top:791.84px;font-size:12.00px;color:#000;letter-spacing:-0.738px;">OK</div>
<div class="abs" style="left:916px;top:784.3px;width:81px;height:26px;background:#e1e1e1;border:1px solid #adadad;"></div>
<div class="t" style="left:938.50px;top:791.84px;font-size:12.00px;color:#000;letter-spacing:-0.311px;">Cancel</div>
<svg class="abs" style="left:0;top:0;overflow:visible" width="1024" height="832" viewBox="0 0 1024 832"><path d="M970 253 l12 12 m0 -12 l-12 12" stroke="#111" stroke-width="1.2" fill="none"/><path d="M636.5 377.6 H646.1 L654 369 L662.4 377.6 H992" fill="none" stroke="#c3c3c3" stroke-width="1.5"/><path d="M645.1 345.7 L653.6 337 L663 345.7 L653.6 354.7 Z" fill="#fff" stroke="#17776a" stroke-width="1.4" stroke-linejoin="round"/><path d="M657.5 339.6 C662 339.8 666.3 342.5 666.6 346.5 C666.8 349 664 350.5 663.2 353.6 C662.8 350.5 663.3 348 662.8 345.8 Z" fill="#17776a"/><circle cx="652.8" cy="336.7" r="2.3" fill="none" stroke="#17776a" stroke-width="1.2"/><path d="M654.2 337.5 V342" stroke="#17776a" stroke-width="1.2"/><circle cx="654.2" cy="342.3" r="1.5" fill="#17776a"/><path d="M698.6 334.2 L707.7 341.7 L704 351.7 L693 351.7 L689.5 341.7 Z" fill="#fff" stroke="#6a6a6a" stroke-width="1"/><path d="M693 351.7 H704" stroke="#4a4a4a" stroke-width="1.8"/><path d="M693 352 L691.6 356 M704 352 L705.4 356" stroke="#bbb" stroke-width="1"/><path d="M644.2 396.7 H652.4 V388.9 Z" fill="#2e8577"/><circle cx="668.3" cy="423.4" r="6.9" fill="#fff" stroke="#333" stroke-width="1.1"/><circle cx="668.3" cy="447" r="6.9" fill="#fff" stroke="#333" stroke-width="1.1"/><circle cx="668.3" cy="470.5" r="6.9" fill="#fff" stroke="#333" stroke-width="1.1"/><circle cx="668.3" cy="494" r="6.9" fill="#fff" stroke="#333" stroke-width="1.1"/><circle cx="668.3" cy="517.6" r="6.9" fill="#fff" stroke="#333" stroke-width="1.1"/><circle cx="668.3" cy="517.6" r="4.3" fill="#333"/><path d="M978.2 395.2 h8 l-4 -4.4 Z" fill="#555"/><path d="M978.2 760 h8 l-4 4.4 Z" fill="#666"/><rect x="1000" y="808.3" width="2" height="2" fill="#bcbcbc"/><rect x="996.5" y="812" width="2" height="2" fill="#bcbcbc"/><rect x="1000" y="812" width="2" height="2" fill="#bcbcbc"/><rect x="993" y="815.7" width="2" height="2" fill="#bcbcbc"/><rect x="996.5" y="815.7" width="2" height="2" fill="#bcbcbc"/><rect x="1000" y="815.7" width="2" height="2" fill="#bcbcbc"/><g fill="#000"><path transform="translate(675.80 569.90) scale(1.1825)" d="M0 0h1v1h-1zM8 0h1v1h-1zM16 0h1v1h-1zM24 0h1v1h-1zM4 4h1v1h-1zM12 4h1v1h-1zM20 4h1v1h-1zM0 8h1v1h-1zM8 8h1v1h-1zM16 8h1v1h-1zM24 8h1v1h-1zM4 12h1v1h-1zM12 12h1v1h-1zM20 12h1v1h-1zM0 16h1v1h-1zM8 16h1v1h-1zM16 16h1v1h-1zM24 16h1v1h-1z"/><path transform="translate(715.23 569.90) scale(1.1825)" d="M0 0h1v1h-1zM8 0h1v1h-1zM16 0h1v1h-1zM24 0h1v1h-1zM4 2h1v1h-1zM12 2h1v1h-1zM20 2h1v1h-1zM0 4h1v1h-1zM8 4h1v1h-1zM16 4h1v1h-1zM24 4h1v1h-1zM4 6h1v1h-1zM12 6h1v1h-1zM20 6h1v1h-1zM0 8h1v1h-1zM8 8h1v1h-1zM16 8h1v1h-1zM24 8h1v1h-1zM4 10h1v1h-1zM12 10h1v1h-1zM20 10h1v1h-1zM0 12h1v1h-1zM8 12h1v1h-1zM16 12h1v1h-1zM24 12h1v1h-1zM4 14h1v1h-1zM12 14h1v1h-1zM20 14h1v1h-1zM0 16h1v1h-1zM8 16h1v1h-1zM16 16h1v1h-1zM24 16h1v1h-1zM4 18h1v1h-1zM12 18h1v1h-1zM20 18h1v1h-1z"/><path transform="translate(754.66 569.90) scale(1.1825)" d="M0 0h1v1h-1zM4 0h1v1h-1zM8 0h1v1h-1zM12 0h1v1h-1zM16 0h1v1h-1zM20 0h1v1h-1zM24 0h1v1h-1zM2 2h1v1h-1zM6 2h1v1h-1zM10 2h1v1h-1zM14 2h1v1h-1zM18 2h1v1h-1zM22 2h1v1h-1zM26 2h1v1h-1zM0 4h1v1h-1zM4 4h1v1h-1zM8 4h1v1h-1zM12 4h1v1h-1zM16 4h1v1h-1zM20 4h1v1h-1zM24 4h1v1h-1zM2 6h1v1h-1zM6 6h1v1h-1zM10 6h1v1h-1zM14 6h1v1h-1zM18 6h1v1h-1zM22 6h1v1h-1zM26 6h1v1h-1zM0 8h1v1h-1zM4 8h1v1h-1zM8 8h1v1h-1zM12 8h1v1h-1zM16 8h1v1h-1zM20 8h1v1h-1zM24 8h1v1h-1zM2 10h1v1h-1zM6 10h1v1h-1zM10 10h1v1h-1zM14 10h1v1h-1zM18 10h1v1h-1zM22 10h1v1h-1zM26 10h1v1h-1zM0 12h1v1h-1zM4 12h1v1h-1zM8 12h1v1h-1zM12 12h1v1h-1zM16 12h1v1h-1zM20 12h1v1h-1zM24 12h1v1h-1zM2 14h1v1h-1zM6 14h1v1h-1zM10 14h1v1h-1zM14 14h1v1h-1zM18 14h1v1h-1zM22 14h1v1h-1zM26 14h1v1h-1zM0 16h1v1h-1zM4 16h1v1h-1zM8 16h1v1h-1zM12 16h1v1h-1zM16 16h1v1h-1zM20 16h1v1h-1zM24 16h1v1h-1zM2 18h1v1h-1zM6 18h1v1h-1zM10 18h1v1h-1zM14 18h1v1h-1zM18 18h1v1h-1zM22 18h1v1h-1zM26 18h1v1h-1z"/><path transform="translate(794.09 569.90) scale(1.1825)" d="M0 0h1v1h-1zM4 0h1v1h-1zM8 0h1v1h-1zM12 0h1v1h-1zM16 0h1v1h-1zM20 0h1v1h-1zM24 0h1v1h-1zM2 1h1v1h-1zM6 1h1v1h-1zM10 1h1v1h-1zM14 1h1v1h-1zM18 1h1v1h-1zM22 1h1v1h-1zM26 1h1v1h-1zM0 2h1v1h-1zM4 2h1v1h-1zM8 2h1v1h-1zM12 2h1v1h-1zM16 2h1v1h-1zM20 2h1v1h-1zM24 2h1v1h-1zM2 3h1v1h-1zM6 3h1v1h-1zM10 3h1v1h-1zM14 3h1v1h-1zM18 3h1v1h-1zM22 3h1v1h-1zM26 3h1v1h-1zM0 4h1v1h-1zM4 4h1v1h-1zM8 4h1v1h-1zM12 4h1v1h-1zM16 4h1v1h-1zM20 4h1v1h-1zM24 4h1v1h-1zM2 5h1v1h-1zM6 5h1v1h-1zM10 5h1v1h-1zM14 5h1v1h-1zM18 5h1v1h-1zM22 5h1v1h-1zM26 5h1v1h-1zM0 6h1v1h-1zM4 6h1v1h-1zM8 6h1v1h-1zM12 6h1v1h-1zM16 6h1v1h-1zM20 6h1v1h-1zM24 6h1v1h-1zM2 7h1v1h-1zM6 7h1v1h-1zM10 7h1v1h-1zM14 7h1v1h-1zM18 7h1v1h-1zM22 7h1v1h-1zM26 7h1v1h-1zM0 8h1v1h-1zM4 8h1v1h-1zM8 8h1v1h-1zM12 8h1v1h-1zM16 8h1v1h-1zM20 8h1v1h-1zM24 8h1v1h-1zM2 9h1v1h-1zM6 9h1v1h-1zM10 9h1v1h-1zM14 9h1v1h-1zM18 9h1v1h-1zM22 9h1v1h-1zM26 9h1v1h-1zM0 10h1v1h-1zM4 10h1v1h-1zM8 10h1v1h-1zM12 10h1v1h-1zM16 10h1v1h-1zM20 10h1v1h-1zM24 10h1v1h-1zM2 11h1v1h-1zM6 11h1v1h-1zM10 11h1v1h-1zM14 11h1v1h-1zM18 11h1v1h-1zM22 11h1v1h-1zM26 11h1v1h-1zM0 12h1v1h-1zM4 12h1v1h-1zM8 12h1v1h-1zM12 12h1v1h-1zM16 12h1v1h-1zM20 12h1v1h-1zM24 12h1v1h-1zM2 13h1v1h-1zM6 13h1v1h-1zM10 13h1v1h-1zM14 13h1v1h-1zM18 13h1v1h-1zM22 13h1v1h-1zM26 13h1v1h-1zM0 14h1v1h-1zM4 14h1v1h-1zM8 14h1v1h-1zM12 14h1v1h-1zM16 14h1v1h-1zM20 14h1v1h-1zM24 14h1v1h-1zM2 15h1v1h-1zM6 15h1v1h-1zM10 15h1v1h-1zM14 15h1v1h-1zM18 15h1v1h-1zM22 15h1v1h-1zM26 15h1v1h-1zM0 16h1v1h-1zM4 16h1v1h-1zM8 16h1v1h-1zM12 16h1v1h-1zM16 16h1v1h-1zM20 16h1v1h-1zM24 16h1v1h-1zM2 17h1v1h-1zM6 17h1v1h-1zM10 17h1v1h-1zM14 17h1v1h-1zM18 17h1v1h-1zM22 17h1v1h-1zM26 17h1v1h-1zM0 18h1v1h-1zM4 18h1v1h-1zM8 18h1v1h-1zM12 18h1v1h-1zM16 18h1v1h-1zM20 18h1v1h-1zM24 18h1v1h-1z"/><path transform="translate(833.52 569.90) scale(1.1825)" d="M0 0h1v1h-1zM2 0h1v1h-1zM4 0h1v1h-1zM6 0h1v1h-1zM8 0h1v1h-1zM10 0h1v1h-1zM12 0h1v1h-1zM14 0h1v1h-1zM16 0h1v1h-1zM18 0h1v1h-1zM20 0h1v1h-1zM22 0h1v1h-1zM24 0h1v1h-1zM26 0h1v1h-1zM1 1h1v1h-1zM5 1h1v1h-1zM9 1h1v1h-1zM13 1h1v1h-1zM17 1h1v1h-1zM21 1h1v1h-1zM25 1h1v1h-1zM0 2h1v1h-1zM2 2h1v1h-1zM4 2h1v1h-1zM6 2h1v1h-1zM8 2h1v1h-1zM10 2h1v1h-1zM12 2h1v1h-1zM14 2h1v1h-1zM16 2h1v1h-1zM18 2h1v1h-1zM20 2h1v1h-1zM22 2h1v1h-1zM24 2h1v1h-1zM26 2h1v1h-1zM3 3h1v1h-1zM7 3h1v1h-1zM11 3h1v1h-1zM15 3h1v1h-1zM19 3h1v1h-1zM23 3h1v1h-1zM0 4h1v1h-1zM2 4h1v1h-1zM4 4h1v1h-1zM6 4h1v1h-1zM8 4h1v1h-1zM10 4h1v1h-1zM12 4h1v1h-1zM14 4h1v1h-1zM16 4h1v1h-1zM18 4h1v1h-1zM20 4h1v1h-1zM22 4h1v1h-1zM24 4h1v1h-1zM26 4h1v1h-1zM1 5h1v1h-1zM5 5h1v1h-1zM9 5h1v1h-1zM13 5h1v1h-1zM17 5h1v1h-1zM21 5h1v1h-1zM25 5h1v1h-1zM0 6h1v1h-1zM2 6h1v1h-1zM4 6h1v1h-1zM6 6h1v1h-1zM8 6h1v1h-1zM10 6h1v1h-1zM12 6h1v1h-1zM14 6h1v1h-1zM16 6h1v1h-1zM18 6h1v1h-1zM20 6h1v1h-1zM22 6h1v1h-1zM24 6h1v1h-1zM26 6h1v1h-1zM3 7h1v1h-1zM7 7h1v1h-1zM11 7h1v1h-1zM15 7h1v1h-1zM19 7h1v1h-1zM23 7h1v1h-1zM0 8h1v1h-1zM2 8h1v1h-1zM4 8h1v1h-1zM6 8h1v1h-1zM8 8h1v1h-1zM10 8h1v1h-1zM12 8h1v1h-1zM14 8h1v1h-1zM16 8h1v1h-1zM18 8h1v1h-1zM20 8h1v1h-1zM22 8h1v1h-1zM24 8h1v1h-1zM26 8h1v1h-1zM1 9h1v1h-1zM5 9h1v1h-1zM9 9h1v1h-1zM13 9h1v1h-1zM17 9h1v1h-1zM21 9h1v1h-1zM25 9h1v1h-1zM0 10h1v1h-1zM2 10h1v1h-1zM4 10h1v1h-1zM6 10h1v1h-1zM8 10h1v1h-1zM10 10h1v1h-1zM12 10h1v1h-1zM14 10h1v1h-1zM16 10h1v1h-1zM18 10h1v1h-1zM20 10h1v1h-1zM22 10h1v1h-1zM24 10h1v1h-1zM26 10h1v1h-1zM3 11h1v1h-1zM7 11h1v1h-1zM11 11h1v1h-1zM15 11h1v1h-1zM19 11h1v1h-1zM23 11h1v1h-1zM0 12h1v1h-1zM2 12h1v1h-1zM4 12h1v1h-1zM6 12h1v1h-1zM8 12h1v1h-1zM10 12h1v1h-1zM12 12h1v1h-1zM14 12h1v1h-1zM16 12h1v1h-1zM18 12h1v1h-1zM20 12h1v1h-1zM22 12h1v1h-1zM24 12h1v1h-1zM26 12h1v1h-1zM1 13h1v1h-1zM5 13h1v1h-1zM9 13h1v1h-1zM13 13h1v1h-1zM17 13h1v1h-1zM21 13h1v1h-1zM25 13h1v1h-1zM0 14h1v1h-1zM2 14h1v1h-1zM4 14h1v1h-1zM6 14h1v1h-1zM8 14h1v1h-1zM10 14h1v1h-1zM12 14h1v1h-1zM14 14h1v1h-1zM16 14h1v1h-1zM18 14h1v1h-1zM20 14h1v1h-1zM22 14h1v1h-1zM24 14h1v1h-1zM26 14h1v1h-1zM3 15h1v1h-1zM7 15h1v1h-1zM11 15h1v1h-1zM15 15h1v1h-1zM19 15h1v1h-1zM23 15h1v1h-1zM0 16h1v1h-1zM2 16h1v1h-1zM4 16h1v1h-1zM6 16h1v1h-1zM8 16h1v1h-1zM10 16h1v1h-1zM12 16h1v1h-1zM14 16h1v1h-1zM16 16h1v1h-1zM18 16h1v1h-1zM20 16h1v1h-1zM22 16h1v1h-1zM24 16h1v1h-1zM26 16h1v1h-1zM1 17h1v1h-1zM5 17h1v1h-1zM9 17h1v1h-1zM13 17h1v1h-1zM17 17h1v1h-1zM21 17h1v1h-1zM25 17h1v1h-1zM0 18h1v1h-1zM2 18h1v1h-1zM4 18h1v1h-1zM6 18h1v1h-1zM8 18h1v1h-1zM10 18h1v1h-1zM12 18h1v1h-1zM14 18h1v1h-1zM16 18h1v1h-1zM18 18h1v1h-1zM20 18h1v1h-1zM22 18h1v1h-1zM24 18h1v1h-1zM26 18h1v1h-1z"/><path transform="translate(872.95 569.90) scale(1.1825)" d="M0 0h1v1h-1zM2 0h1v1h-1zM4 0h1v1h-1zM6 0h1v1h-1zM8 0h1v1h-1zM10 0h1v1h-1zM12 0h1v1h-1zM14 0h1v1h-1zM16 0h1v1h-1zM18 0h1v1h-1zM20 0h1v1h-1zM22 0h1v1h-1zM24 0h1v1h-1zM26 0h1v1h-1zM1 1h1v1h-1zM3 1h1v1h-1zM5 1h1v1h-1zM7 1h1v1h-1zM9 1h1v1h-1zM11 1h1v1h-1zM13 1h1v1h-1zM15 1h1v1h-1zM17 1h1v1h-1zM19 1h1v1h-1zM21 1h1v1h-1zM23 1h1v1h-1zM25 1h1v1h-1zM0 2h1v1h-1zM2 2h1v1h-1zM4 2h1v1h-1zM6 2h1v1h-1zM8 2h1v1h-1zM10 2h1v1h-1zM12 2h1v1h-1zM14 2h1v1h-1zM16 2h1v1h-1zM18 2h1v1h-1zM20 2h1v1h-1zM22 2h1v1h-1zM24 2h1v1h-1zM26 2h1v1h-1zM1 3h1v1h-1zM3 3h1v1h-1zM7 3h1v1h-1zM9 3h1v1h-1zM11 3h1v1h-1zM15 3h1v1h-1zM17 3h1v1h-1zM19 3h1v1h-1zM23 3h1v1h-1zM25 3h1v1h-1zM0 4h1v1h-1zM2 4h1v1h-1zM4 4h1v1h-1zM6 4h1v1h-1zM8 4h1v1h-1zM10 4h1v1h-1zM12 4h1v1h-1zM14 4h1v1h-1zM16 4h1v1h-1zM18 4h1v1h-1zM20 4h1v1h-1zM22 4h1v1h-1zM24 4h1v1h-1zM26 4h1v1h-1zM1 5h1v1h-1zM3 5h1v1h-1zM5 5h1v1h-1zM7 5h1v1h-1zM9 5h1v1h-1zM11 5h1v1h-1zM13 5h1v1h-1zM15 5h1v1h-1zM17 5h1v1h-1zM19 5h1v1h-1zM21 5h1v1h-1zM23 5h1v1h-1zM25 5h1v1h-1zM0 6h1v1h-1zM2 6h1v1h-1zM4 6h1v1h-1zM6 6h1v1h-1zM8 6h1v1h-1zM10 6h1v1h-1zM12 6h1v1h-1zM14 6h1v1h-1zM16 6h1v1h-1zM18 6h1v1h-1zM20 6h1v1h-1zM22 6h1v1h-1zM24 6h1v1h-1zM26 6h1v1h-1zM3 7h1v1h-1zM5 7h1v1h-1zM7 7h1v1h-1zM11 7h1v1h-1zM13 7h1v1h-1zM15 7h1v1h-1zM19 7h1v1h-1zM21 7h1v1h-1zM23 7h1v1h-1zM0 8h1v1h-1zM2 8h1v1h-1zM4 8h1v1h-1zM6 8h1v1h-1zM8 8h1v1h-1zM10 8h1v1h-1zM12 8h1v1h-1zM14 8h1v1h-1zM16 8h1v1h-1zM18 8h1v1h-1zM20 8h1v1h-1zM22 8h1v1h-1zM24 8h1v1h-1zM26 8h1v1h-1zM1 9h1v1h-1zM3 9h1v1h-1zM5 9h1v1h-1zM7 9h1v1h-1zM9 9h1v1h-1zM11 9h1v1h-1zM13 9h1v1h-1zM15 9h1v1h-1zM17 9h1v1h-1zM19 9h1v1h-1zM21 9h1v1h-1zM23 9h1v1h-1zM25 9h1v1h-1zM0 10h1v1h-1zM2 10h1v1h-1zM4 10h1v1h-1zM6 10h1v1h-1zM8 10h1v1h-1zM10 10h1v1h-1zM12 10h1v1h-1zM14 10h1v1h-1zM16 10h1v1h-1zM18 10h1v1h-1zM20 10h1v1h-1zM22 10h1v1h-1zM24 10h1v1h-1zM26 10h1v1h-1zM1 11h1v1h-1zM3 11h1v1h-1zM7 11h1v1h-1zM9 11h1v1h-1zM11 11h1v1h-1zM15 11h1v1h-1zM17 11h1v1h-1zM19 11h1v1h-1zM23 11h1v1h-1zM25 11h1v1h-1zM0 12h1v1h-1zM2 12h1v1h-1zM4 12h1v1h-1zM6 12h1v1h-1zM8 12h1v1h-1zM10 12h1v1h-1zM12 12h1v1h-1zM14 12h1v1h-1zM16 12h1v1h-1zM18 12h1v1h-1zM20 12h1v1h-1zM22 12h1v1h-1zM24 12h1v1h-1zM26 12h1v1h-1zM1 13h1v1h-1zM3 13h1v1h-1zM5 13h1v1h-1zM7 13h1v1h-1zM9 13h1v1h-1zM11 13h1v1h-1zM13 13h1v1h-1zM15 13h1v1h-1zM17 13h1v1h-1zM19 13h1v1h-1zM21 13h1v1h-1zM23 13h1v1h-1zM25 13h1v1h-1zM0 14h1v1h-1zM2 14h1v1h-1zM4 14h1v1h-1zM6 14h1v1h-1zM8 14h1v1h-1zM10 14h1v1h-1zM12 14h1v1h-1zM14 14h1v1h-1zM16 14h1v1h-1zM18 14h1v1h-1zM20 14h1v1h-1zM22 14h1v1h-1zM24 14h1v1h-1zM26 14h1v1h-1zM3 15h1v1h-1zM5 15h1v1h-1zM7 15h1v1h-1zM11 15h1v1h-1zM13 15h1v1h-1zM15 15h1v1h-1zM19 15h1v1h-1zM21 15h1v1h-1zM23 15h1v1h-1zM0 16h1v1h-1zM2 16h1v1h-1zM4 16h1v1h-1zM6 16h1v1h-1zM8 16h1v1h-1zM10 16h1v1h-1zM12 16h1v1h-1zM14 16h1v1h-1zM16 16h1v1h-1zM18 16h1v1h-1zM20 16h1v1h-1zM22 16h1v1h-1zM24 16h1v1h-1zM26 16h1v1h-1zM1 17h1v1h-1zM3 17h1v1h-1zM5 17h1v1h-1zM7 17h1v1h-1zM9 17h1v1h-1zM11 17h1v1h-1zM13 17h1v1h-1zM15 17h1v1h-1zM17 17h1v1h-1zM19 17h1v1h-1zM21 17h1v1h-1zM23 17h1v1h-1zM25 17h1v1h-1zM0 18h1v1h-1zM2 18h1v1h-1zM4 18h1v1h-1zM6 18h1v1h-1zM8 18h1v1h-1zM10 18h1v1h-1zM12 18h1v1h-1zM14 18h1v1h-1zM16 18h1v1h-1zM18 18h1v1h-1zM20 18h1v1h-1zM22 18h1v1h-1zM24 18h1v1h-1zM26 18h1v1h-1z"/><path transform="translate(675.80 599.95) scale(1.1825)" d="M0 0h1v1h-1zM2 0h1v1h-1zM4 0h1v1h-1zM6 0h1v1h-1zM8 0h1v1h-1zM10 0h1v1h-1zM12 0h1v1h-1zM14 0h1v1h-1zM16 0h1v1h-1zM18 0h1v1h-1zM20 0h1v1h-1zM22 0h1v1h-1zM24 0h1v1h-1zM26 0h1v1h-1zM1 1h1v1h-1zM3 1h1v1h-1zM5 1h1v1h-1zM7 1h1v1h-1zM9 1h1v1h-1zM11 1h1v1h-1zM13 1h1v1h-1zM15 1h1v1h-1zM17 1h1v1h-1zM19 1h1v1h-1zM21 1h1v1h-1zM23 1h1v1h-1zM25 1h1v1h-1zM0 2h1v1h-1zM2 2h1v1h-1zM4 2h1v1h-1zM6 2h1v1h-1zM8 2h1v1h-1zM10 2h1v1h-1zM12 2h1v1h-1zM14 2h1v1h-1zM16 2h1v1h-1zM18 2h1v1h-1zM20 2h1v1h-1zM22 2h1v1h-1zM24 2h1v1h-1zM26 2h1v1h-1zM1 3h1v1h-1zM3 3h1v1h-1zM5 3h1v1h-1zM7 3h1v1h-1zM9 3h1v1h-1zM11 3h1v1h-1zM13 3h1v1h-1zM15 3h1v1h-1zM17 3h1v1h-1zM19 3h1v1h-1zM21 3h1v1h-1zM23 3h1v1h-1zM25 3h1v1h-1zM0 4h1v1h-1zM2 4h1v1h-1zM4 4h1v1h-1zM6 4h1v1h-1zM8 4h1v1h-1zM10 4h1v1h-1zM12 4h1v1h-1zM14 4h1v1h-1zM16 4h1v1h-1zM18 4h1v1h-1zM20 4h1v1h-1zM22 4h1v1h-1zM24 4h1v1h-1zM26 4h1v1h-1zM1 5h1v1h-1zM3 5h1v1h-1zM5 5h1v1h-1zM7 5h1v1h-1zM9 5h1v1h-1zM11 5h1v1h-1zM13 5h1v1h-1zM15 5h1v1h-1zM17 5h1v1h-1zM19 5h1v1h-1zM21 5h1v1h-1zM23 5h1v1h-1zM25 5h1v1h-1zM0 6h1v1h-1zM2 6h1v1h-1zM4 6h1v1h-1zM6 6h1v1h-1zM8 6h1v1h-1zM10 6h1v1h-1zM12 6h1v1h-1zM14 6h1v1h-1zM16 6h1v1h-1zM18 6h1v1h-1zM20 6h1v1h-1zM22 6h1v1h-1zM24 6h1v1h-1zM26 6h1v1h-1zM1 7h1v1h-1zM3 7h1v1h-1zM5 7h1v1h-1zM7 7h1v1h-1zM9 7h1v1h-1zM11 7h1v1h-1zM13 7h1v1h-1zM15 7h1v1h-1zM17 7h1v1h-1zM19 7h1v1h-1zM21 7h1v1h-1zM23 7h1v1h-1zM25 7h1v1h-1zM0 8h1v1h-1zM2 8h1v1h-1zM4 8h1v1h-1zM6 8h1v1h-1zM8 8h1v1h-1zM10 8h1v1h-1zM12 8h1v1h-1zM14 8h1v1h-1zM16 8h1v1h-1zM18 8h1v1h-1zM20 8h1v1h-1zM22 8h1v1h-1zM24 8h1v1h-1zM26 8h1v1h-1zM1 9h1v1h-1zM3 9h1v1h-1zM5 9h1v1h-1zM7 9h1v1h-1zM9 9h1v1h-1zM11 9h1v1h-1zM13 9h1v1h-1zM15 9h1v1h-1zM17 9h1v1h-1zM19 9h1v1h-1zM21 9h1v1h-1zM23 9h1v1h-1zM25 9h1v1h-1zM0 10h1v1h-1zM2 10h1v1h-1zM4 10h1v1h-1zM6 10h1v1h-1zM8 10h1v1h-1zM10 10h1v1h-1zM12 10h1v1h-1zM14 10h1v1h-1zM16 10h1v1h-1zM18 10h1v1h-1zM20 10h1v1h-1zM22 10h1v1h-1zM24 10h1v1h-1zM26 10h1v1h-1zM1 11h1v1h-1zM3 11h1v1h-1zM5 11h1v1h-1zM7 11h1v1h-1zM9 11h1v1h-1zM11 11h1v1h-1zM13 11h1v1h-1zM15 11h1v1h-1zM17 11h1v1h-1zM19 11h1v1h-1zM21 11h1v1h-1zM23 11h1v1h-1zM25 11h1v1h-1zM0 12h1v1h-1zM2 12h1v1h-1zM4 12h1v1h-1zM6 12h1v1h-1zM8 12h1v1h-1zM10 12h1v1h-1zM12 12h1v1h-1zM14 12h1v1h-1zM16 12h1v1h-1zM18 12h1v1h-1zM20 12h1v1h-1zM22 12h1v1h-1zM24 12h1v1h-1zM26 12h1v1h-1zM1 13h1v1h-1zM3 13h1v1h-1zM5 13h1v1h-1zM7 13h1v1h-1zM9 13h1v1h-1zM11 13h1v1h-1zM13 13h1v1h-1zM15 13h1v1h-1zM17 13h1v1h-1zM19 13h1v1h-1zM21 13h1v1h-1zM23 13h1v1h-1zM25 13h1v1h-1zM0 14h1v1h-1zM2 14h1v1h-1zM4 14h1v1h-1zM6 14h1v1h-1zM8 14h1v1h-1zM10 14h1v1h-1zM12 14h1v1h-1zM14 14h1v1h-1zM16 14h1v1h-1zM18 14h1v1h-1zM20 14h1v1h-1zM22 14h1v1h-1zM24 14h1v1h-1zM26 14h1v1h-1zM1 15h1v1h-1zM3 15h1v1h-1zM5 15h1v1h-1zM7 15h1v1h-1zM9 15h1v1h-1zM11 15h1v1h-1zM13 15h1v1h-1zM15 15h1v1h-1zM17 15h1v1h-1zM19 15h1v1h-1zM21 15h1v1h-1zM23 15h1v1h-1zM25 15h1v1h-1zM0 16h1v1h-1zM2 16h1v1h-1zM4 16h1v1h-1zM6 16h1v1h-1zM8 16h1v1h-1zM10 16h1v1h-1zM12 16h1v1h-1zM14 16h1v1h-1zM16 16h1v1h-1zM18 16h1v1h-1zM20 16h1v1h-1zM22 16h1v1h-1zM24 16h1v1h-1zM26 16h1v1h-1zM1 17h1v1h-1zM3 17h1v1h-1zM5 17h1v1h-1zM7 17h1v1h-1zM9 17h1v1h-1zM11 17h1v1h-1zM13 17h1v1h-1zM15 17h1v1h-1zM17 17h1v1h-1zM19 17h1v1h-1zM21 17h1v1h-1zM23 17h1v1h-1zM25 17h1v1h-1zM0 18h1v1h-1zM2 18h1v1h-1zM4 18h1v1h-1zM6 18h1v1h-1zM8 18h1v1h-1zM10 18h1v1h-1zM12 18h1v1h-1zM14 18h1v1h-1zM16 18h1v1h-1zM18 18h1v1h-1zM20 18h1v1h-1zM22 18h1v1h-1zM24 18h1v1h-1zM26 18h1v1h-1z"/><path transform="translate(715.23 599.95) scale(1.1825)" d="M0 0h3v1h-3zM4 0h3v1h-3zM8 0h3v1h-3zM12 0h3v1h-3zM16 0h3v1h-3zM20 0h3v1h-3zM24 0h3v1h-3zM1 1h1v1h-1zM3 1h1v1h-1zM5 1h1v1h-1zM7 1h1v1h-1zM9 1h1v1h-1zM11 1h1v1h-1zM13 1h1v1h-1zM15 1h1v1h-1zM17 1h1v1h-1zM19 1h1v1h-1zM21 1h1v1h-1zM23 1h1v1h-1zM25 1h1v1h-1zM0 2h1v1h-1zM2 2h3v1h-3zM6 2h3v1h-3zM10 2h3v1h-3zM14 2h3v1h-3zM18 2h3v1h-3zM22 2h3v1h-3zM26 2h1v1h-1zM1 3h1v1h-1zM3 3h1v1h-1zM5 3h1v1h-1zM7 3h1v1h-1zM9 3h1v1h-1zM11 3h1v1h-1zM13 3h1v1h-1zM15 3h1v1h-1zM17 3h1v1h-1zM19 3h1v1h-1zM21 3h1v1h-1zM23 3h1v1h-1zM25 3h1v1h-1zM0 4h3v1h-3zM4 4h3v1h-3zM8 4h3v1h-3zM12 4h3v1h-3zM16 4h3v1h-3zM20 4h3v1h-3zM24 4h3v1h-3zM1 5h1v1h-1zM3 5h1v1h-1zM5 5h1v1h-1zM7 5h1v1h-1zM9 5h1v1h-1zM11 5h1v1h-1zM13 5h1v1h-1zM15 5h1v1h-1zM17 5h1v1h-1zM19 5h1v1h-1zM21 5h1v1h-1zM23 5h1v1h-1zM25 5h1v1h-1zM0 6h1v1h-1zM2 6h3v1h-3zM6 6h3v1h-3zM10 6h3v1h-3zM14 6h3v1h-3zM18 6h3v1h-3zM22 6h3v1h-3zM26 6h1v1h-1zM1 7h1v1h-1zM3 7h1v1h-1zM5 7h1v1h-1zM7 7h1v1h-1zM9 7h1v1h-1zM11 7h1v1h-1zM13 7h1v1h-1zM15 7h1v1h-1zM17 7h1v1h-1zM19 7h1v1h-1zM21 7h1v1h-1zM23 7h1v1h-1zM25 7h1v1h-1zM0 8h3v1h-3zM4 8h3v1h-3zM8 8h3v1h-3zM12 8h3v1h-3zM16 8h3v1h-3zM20 8h3v1h-3zM24 8h3v1h-3zM1 9h1v1h-1zM3 9h1v1h-1zM5 9h1v1h-1zM7 9h1v1h-1zM9 9h1v1h-1zM11 9h1v1h-1zM13 9h1v1h-1zM15 9h1v1h-1zM17 9h1v1h-1zM19 9h1v1h-1zM21 9h1v1h-1zM23 9h1v1h-1zM25 9h1v1h-1zM0 10h1v1h-1zM2 10h3v1h-3zM6 10h3v1h-3zM10 10h3v1h-3zM14 10h3v1h-3zM18 10h3v1h-3zM22 10h3v1h-3zM26 10h1v1h-1zM1 11h1v1h-1zM3 11h1v1h-1zM5 11h1v1h-1zM7 11h1v1h-1zM9 11h1v1h-1zM11 11h1v1h-1zM13 11h1v1h-1zM15 11h1v1h-1zM17 11h1v1h-1zM19 11h1v1h-1zM21 11h1v1h-1zM23 11h1v1h-1zM25 11h1v1h-1zM0 12h3v1h-3zM4 12h3v1h-3zM8 12h3v1h-3zM12 12h3v1h-3zM16 12h3v1h-3zM20 12h3v1h-3zM24 12h3v1h-3zM1 13h1v1h-1zM3 13h1v1h-1zM5 13h1v1h-1zM7 13h1v1h-1zM9 13h1v1h-1zM11 13h1v1h-1zM13 13h1v1h-1zM15 13h1v1h-1zM17 13h1v1h-1zM19 13h1v1h-1zM21 13h1v1h-1zM23 13h1v1h-1zM25 13h1v1h-1zM0 14h1v1h-1zM2 14h3v1h-3zM6 14h3v1h-3zM10 14h3v1h-3zM14 14h3v1h-3zM18 14h3v1h-3zM22 14h3v1h-3zM26 14h1v1h-1zM1 15h1v1h-1zM3 15h1v1h-1zM5 15h1v1h-1zM7 15h1v1h-1zM9 15h1v1h-1zM11 15h1v1h-1zM13 15h1v1h-1zM15 15h1v1h-1zM17 15h1v1h-1zM19 15h1v1h-1zM21 15h1v1h-1zM23 15h1v1h-1zM25 15h1v1h-1zM0 16h3v1h-3zM4 16h3v1h-3zM8 16h3v1h-3zM12 16h3v1h-3zM16 16h3v1h-3zM20 16h3v1h-3zM24 16h3v1h-3zM1 17h1v1h-1zM3 17h1v1h-1zM5 17h1v1h-1zM7 17h1v1h-1zM9 17h1v1h-1zM11 17h1v1h-1zM13 17h1v1h-1zM15 17h1v1h-1zM17 17h1v1h-1zM19 17h1v1h-1zM21 17h1v1h-1zM23 17h1v1h-1zM25 17h1v1h-1zM0 18h1v1h-1zM2 18h3v1h-3zM6 18h3v1h-3zM10 18h3v1h-3zM14 18h3v1h-3zM18 18h3v1h-3zM22 18h3v1h-3zM26 18h1v1h-1z"/><path transform="translate(754.66 599.95) scale(1.1825)" d="M1 0h3v1h-3zM5 0h3v1h-3zM9 0h3v1h-3zM13 0h3v1h-3zM17 0h3v1h-3zM21 0h3v1h-3zM25 0h2v1h-2zM0 1h2v1h-2zM3 1h3v1h-3zM7 1h3v1h-3zM11 1h3v1h-3zM15 1h3v1h-3zM19 1h3v1h-3zM23 1h3v1h-3zM1 2h3v1h-3zM5 2h3v1h-3zM9 2h3v1h-3zM13 2h3v1h-3zM17 2h3v1h-3zM21 2h3v1h-3zM25 2h2v1h-2zM0 3h2v1h-2zM3 3h3v1h-3zM7 3h3v1h-3zM11 3h3v1h-3zM15 3h3v1h-3zM19 3h3v1h-3zM23 3h3v1h-3zM1 4h3v1h-3zM5 4h3v1h-3zM9 4h3v1h-3zM13 4h3v1h-3zM17 4h3v1h-3zM21 4h3v1h-3zM25 4h2v1h-2zM0 5h2v1h-2zM3 5h3v1h-3zM7 5h3v1h-3zM11 5h3v1h-3zM15 5h3v1h-3zM19 5h3v1h-3zM23 5h3v1h-3zM1 6h3v1h-3zM5 6h3v1h-3zM9 6h3v1h-3zM13 6h3v1h-3zM17 6h3v1h-3zM21 6h3v1h-3zM25 6h2v1h-2zM0 7h2v1h-2zM3 7h3v1h-3zM7 7h3v1h-3zM11 7h3v1h-3zM15 7h3v1h-3zM19 7h3v1h-3zM23 7h3v1h-3zM1 8h3v1h-3zM5 8h3v1h-3zM9 8h3v1h-3zM13 8h3v1h-3zM17 8h3v1h-3zM21 8h3v1h-3zM25 8h2v1h-2zM0 9h2v1h-2zM3 9h3v1h-3zM7 9h3v1h-3zM11 9h3v1h-3zM15 9h3v1h-3zM19 9h3v1h-3zM23 9h3v1h-3zM1 10h3v1h-3zM5 10h3v1h-3zM9 10h3v1h-3zM13 10h3v1h-3zM17 10h3v1h-3zM21 10h3v1h-3zM25 10h2v1h-2zM0 11h2v1h-2zM3 11h3v1h-3zM7 11h3v1h-3zM11 11h3v1h-3zM15 11h3v1h-3zM19 11h3v1h-3zM23 11h3v1h-3zM1 12h3v1h-3zM5 12h3v1h-3zM9 12h3v1h-3zM13 12h3v1h-3zM17 12h3v1h-3zM21 12h3v1h-3zM25 12h2v1h-2zM0 13h2v1h-2zM3 13h3v1h-3zM7 13h3v1h-3zM11 13h3v1h-3zM15 13h3v1h-3zM19 13h3v1h-3zM23 13h3v1h-3zM1 14h3v1h-3zM5 14h3v1h-3zM9 14h3v1h-3zM13 14h3v1h-3zM17 14h3v1h-3zM21 14h3v1h-3zM25 14h2v1h-2zM0 15h2v1h-2zM3 15h3v1h-3zM7 15h3v1h-3zM11 15h3v1h-3zM15 15h3v1h-3zM19 15h3v1h-3zM23 15h3v1h-3zM1 16h3v1h-3zM5 16h3v1h-3zM9 16h3v1h-3zM13 16h3v1h-3zM17 16h3v1h-3zM21 16h3v1h-3zM25 16h2v1h-2zM0 17h2v1h-2zM3 17h3v1h-3zM7 17h3v1h-3zM11 17h3v1h-3zM15 17h3v1h-3zM19 17h3v1h-3zM23 17h3v1h-3zM1 18h3v1h-3zM5 18h3v1h-3zM9 18h3v1h-3zM13 18h3v1h-3zM17 18h3v1h-3zM21 18h3v1h-3zM25 18h2v1h-2z"/><path transform="translate(794.09 599.95) scale(1.1825)" d="M1 0h3v1h-3zM5 0h3v1h-3zM9 0h3v1h-3zM13 0h3v1h-3zM17 0h3v1h-3zM21 0h3v1h-3zM25 0h2v1h-2zM0 1h27v1h-27zM0 2h2v1h-2zM3 2h3v1h-3zM7 2h3v1h-3zM11 2h3v1h-3zM15 2h3v1h-3zM19 2h3v1h-3zM23 2h3v1h-3zM0 3h27v1h-27zM1 4h3v1h-3zM5 4h3v1h-3zM9 4h3v1h-3zM13 4h3v1h-3zM17 4h3v1h-3zM21 4h3v1h-3zM25 4h2v1h-2zM0 5h27v1h-27zM0 6h2v1h-2zM3 6h3v1h-3zM7 6h3v1h-3zM11 6h3v1h-3zM15 6h3v1h-3zM19 6h3v1h-3zM23 6h3v1h-3zM0 7h27v1h-27zM1 8h3v1h-3zM5 8h3v1h-3zM9 8h3v1h-3zM13 8h3v1h-3zM17 8h3v1h-3zM21 8h3v1h-3zM25 8h2v1h-2zM0 9h27v1h-27zM0 10h2v1h-2zM3 10h3v1h-3zM7 10h3v1h-3zM11 10h3v1h-3zM15 10h3v1h-3zM19 10h3v1h-3zM23 10h3v1h-3zM0 11h27v1h-27zM1 12h3v1h-3zM5 12h3v1h-3zM9 12h3v1h-3zM13 12h3v1h-3zM17 12h3v1h-3zM21 12h3v1h-3zM25 12h2v1h-2zM0 13h27v1h-27zM0 14h2v1h-2zM3 14h3v1h-3zM7 14h3v1h-3zM11 14h3v1h-3zM15 14h3v1h-3zM19 14h3v1h-3zM23 14h3v1h-3zM0 15h27v1h-27zM1 16h3v1h-3zM5 16h3v1h-3zM9 16h3v1h-3zM13 16h3v1h-3zM17 16h3v1h-3zM21 16h3v1h-3zM25 16h2v1h-2zM0 17h27v1h-27zM0 18h2v1h-2zM3 18h3v1h-3zM7 18h3v1h-3zM11 18h3v1h-3zM15 18h3v1h-3zM19 18h3v1h-3zM23 18h3v1h-3z"/><path transform="translate(833.52 599.95) scale(1.1825)" d="M0 0h3v1h-3zM4 0h7v1h-7zM12 0h7v1h-7zM20 0h7v1h-7zM0 1h27v1h-27zM0 2h7v1h-7zM8 2h7v1h-7zM16 2h7v1h-7zM24 2h3v1h-3zM0 3h27v1h-27zM0 4h3v1h-3zM4 4h7v1h-7zM12 4h7v1h-7zM20 4h7v1h-7zM0 5h27v1h-27zM0 6h7v1h-7zM8 6h7v1h-7zM16 6h7v1h-7zM24 6h3v1h-3zM0 7h27v1h-27zM0 8h3v1h-3zM4 8h7v1h-7zM12 8h7v1h-7zM20 8h7v1h-7zM0 9h27v1h-27zM0 10h7v1h-7zM8 10h7v1h-7zM16 10h7v1h-7zM24 10h3v1h-3zM0 11h27v1h-27zM0 12h3v1h-3zM4 12h7v1h-7zM12 12h7v1h-7zM20 12h7v1h-7zM0 13h27v1h-27zM0 14h7v1h-7zM8 14h7v1h-7zM16 14h7v1h-7zM24 14h3v1h-3zM0 15h27v1h-27zM0 16h3v1h-3zM4 16h7v1h-7zM12 16h7v1h-7zM20 16h7v1h-7zM0 17h27v1h-27zM0 18h7v1h-7zM8 18h7v1h-7zM16 18h7v1h-7zM24 18h3v1h-3z"/><path transform="translate(872.95 599.95) scale(1.1825)" d="M0 0h27v1h-27zM0 1h27v1h-27zM0 2h27v1h-27zM0 3h4v1h-4zM5 3h7v1h-7zM13 3h7v1h-7zM21 3h6v1h-6zM0 4h27v1h-27zM0 5h27v1h-27zM0 6h27v1h-27zM1 7h7v1h-7zM9 7h7v1h-7zM17 7h7v1h-7zM25 7h2v1h-2zM0 8h27v1h-27zM0 9h27v1h-27zM0 10h27v1h-27zM0 11h4v1h-4zM5 11h7v1h-7zM13 11h7v1h-7zM21 11h6v1h-6zM0 12h27v1h-27zM0 13h27v1h-27zM0 14h27v1h-27zM1 15h7v1h-7zM9 15h7v1h-7zM17 15h7v1h-7zM25 15h2v1h-2zM0 16h27v1h-27zM0 17h27v1h-27zM0 18h27v1h-27z"/><path transform="translate(675.80 630.00) scale(1.1825)" stroke="#000" stroke-width=".22" stroke-linejoin="round" d="M0 0h1v1h-1zM4 0h1v1h-1zM8 0h1v1h-1zM12 0h1v1h-1zM16 0h1v1h-1zM20 0h1v1h-1zM24 0h1v1h-1zM1 1h1v1h-1zM5 1h1v1h-1zM9 1h1v1h-1zM13 1h1v1h-1zM17 1h1v1h-1zM21 1h1v1h-1zM25 1h1v1h-1zM2 2h1v1h-1zM6 2h1v1h-1zM10 2h1v1h-1zM14 2h1v1h-1zM18 2h1v1h-1zM22 2h1v1h-1zM26 2h1v1h-1zM3 3h1v1h-1zM7 3h1v1h-1zM11 3h1v1h-1zM15 3h1v1h-1zM19 3h1v1h-1zM23 3h1v1h-1zM0 4h1v1h-1zM4 4h1v1h-1zM8 4h1v1h-1zM12 4h1v1h-1zM16 4h1v1h-1zM20 4h1v1h-1zM24 4h1v1h-1zM1 5h1v1h-1zM5 5h1v1h-1zM9 5h1v1h-1zM13 5h1v1h-1zM17 5h1v1h-1zM21 5h1v1h-1zM25 5h1v1h-1zM2 6h1v1h-1zM6 6h1v1h-1zM10 6h1v1h-1zM14 6h1v1h-1zM18 6h1v1h-1zM22 6h1v1h-1zM26 6h1v1h-1zM3 7h1v1h-1zM7 7h1v1h-1zM11 7h1v1h-1zM15 7h1v1h-1zM19 7h1v1h-1zM23 7h1v1h-1zM0 8h1v1h-1zM4 8h1v1h-1zM8 8h1v1h-1zM12 8h1v1h-1zM16 8h1v1h-1zM20 8h1v1h-1zM24 8h1v1h-1zM1 9h1v1h-1zM5 9h1v1h-1zM9 9h1v1h-1zM13 9h1v1h-1zM17 9h1v1h-1zM21 9h1v1h-1zM25 9h1v1h-1zM2 10h1v1h-1zM6 10h1v1h-1zM10 10h1v1h-1zM14 10h1v1h-1zM18 10h1v1h-1zM22 10h1v1h-1zM26 10h1v1h-1zM3 11h1v1h-1zM7 11h1v1h-1zM11 11h1v1h-1zM15 11h1v1h-1zM19 11h1v1h-1zM23 11h1v1h-1zM0 12h1v1h-1zM4 12h1v1h-1zM8 12h1v1h-1zM12 12h1v1h-1zM16 12h1v1h-1zM20 12h1v1h-1zM24 12h1v1h-1zM1 13h1v1h-1zM5 13h1v1h-1zM9 13h1v1h-1zM13 13h1v1h-1zM17 13h1v1h-1zM21 13h1v1h-1zM25 13h1v1h-1zM2 14h1v1h-1zM6 14h1v1h-1zM10 14h1v1h-1zM14 14h1v1h-1zM18 14h1v1h-1zM22 14h1v1h-1zM26 14h1v1h-1zM3 15h1v1h-1zM7 15h1v1h-1zM11 15h1v1h-1zM15 15h1v1h-1zM19 15h1v1h-1zM23 15h1v1h-1zM0 16h1v1h-1zM4 16h1v1h-1zM8 16h1v1h-1zM12 16h1v1h-1zM16 16h1v1h-1zM20 16h1v1h-1zM24 16h1v1h-1zM1 17h1v1h-1zM5 17h1v1h-1zM9 17h1v1h-1zM13 17h1v1h-1zM17 17h1v1h-1zM21 17h1v1h-1zM25 17h1v1h-1zM2 18h1v1h-1zM6 18h1v1h-1zM10 18h1v1h-1zM14 18h1v1h-1zM18 18h1v1h-1zM22 18h1v1h-1zM26 18h1v1h-1z"/><path transform="translate(715.23 630.00) scale(1.1825)" stroke="#000" stroke-width=".22" stroke-linejoin="round" d="M3 0h1v1h-1zM7 0h1v1h-1zM11 0h1v1h-1zM15 0h1v1h-1zM19 0h1v1h-1zM23 0h1v1h-1zM2 1h1v1h-1zM6 1h1v1h-1zM10 1h1v1h-1zM14 1h1v1h-1zM18 1h1v1h-1zM22 1h1v1h-1zM26 1h1v1h-1zM1 2h1v1h-1zM5 2h1v1h-1zM9 2h1v1h-1zM13 2h1v1h-1zM17 2h1v1h-1zM21 2h1v1h-1zM25 2h1v1h-1zM0 3h1v1h-1zM4 3h1v1h-1zM8 3h1v1h-1zM12 3h1v1h-1zM16 3h1v1h-1zM20 3h1v1h-1zM24 3h1v1h-1zM3 4h1v1h-1zM7 4h1v1h-1zM11 4h1v1h-1zM15 4h1v1h-1zM19 4h1v1h-1zM23 4h1v1h-1zM2 5h1v1h-1zM6 5h1v1h-1zM10 5h1v1h-1zM14 5h1v1h-1zM18 5h1v1h-1zM22 5h1v1h-1zM26 5h1v1h-1zM1 6h1v1h-1zM5 6h1v1h-1zM9 6h1v1h-1zM13 6h1v1h-1zM17 6h1v1h-1zM21 6h1v1h-1zM25 6h1v1h-1zM0 7h1v1h-1zM4 7h1v1h-1zM8 7h1v1h-1zM12 7h1v1h-1zM16 7h1v1h-1zM20 7h1v1h-1zM24 7h1v1h-1zM3 8h1v1h-1zM7 8h1v1h-1zM11 8h1v1h-1zM15 8h1v1h-1zM19 8h1v1h-1zM23 8h1v1h-1zM2 9h1v1h-1zM6 9h1v1h-1zM10 9h1v1h-1zM14 9h1v1h-1zM18 9h1v1h-1zM22 9h1v1h-1zM26 9h1v1h-1zM1 10h1v1h-1zM5 10h1v1h-1zM9 10h1v1h-1zM13 10h1v1h-1zM17 10h1v1h-1zM21 10h1v1h-1zM25 10h1v1h-1zM0 11h1v1h-1zM4 11h1v1h-1zM8 11h1v1h-1zM12 11h1v1h-1zM16 11h1v1h-1zM20 11h1v1h-1zM24 11h1v1h-1zM3 12h1v1h-1zM7 12h1v1h-1zM11 12h1v1h-1zM15 12h1v1h-1zM19 12h1v1h-1zM23 12h1v1h-1zM2 13h1v1h-1zM6 13h1v1h-1zM10 13h1v1h-1zM14 13h1v1h-1zM18 13h1v1h-1zM22 13h1v1h-1zM26 13h1v1h-1zM1 14h1v1h-1zM5 14h1v1h-1zM9 14h1v1h-1zM13 14h1v1h-1zM17 14h1v1h-1zM21 14h1v1h-1zM25 14h1v1h-1zM0 15h1v1h-1zM4 15h1v1h-1zM8 15h1v1h-1zM12 15h1v1h-1zM16 15h1v1h-1zM20 15h1v1h-1zM24 15h1v1h-1zM3 16h1v1h-1zM7 16h1v1h-1zM11 16h1v1h-1zM15 16h1v1h-1zM19 16h1v1h-1zM23 16h1v1h-1zM2 17h1v1h-1zM6 17h1v1h-1zM10 17h1v1h-1zM14 17h1v1h-1zM18 17h1v1h-1zM22 17h1v1h-1zM26 17h1v1h-1zM1 18h1v1h-1zM5 18h1v1h-1zM9 18h1v1h-1zM13 18h1v1h-1zM17 18h1v1h-1zM21 18h1v1h-1zM25 18h1v1h-1z"/><path transform="translate(754.66 630.00) scale(1.1825)" d="M0 0h2v1h-2zM4 0h2v1h-2zM8 0h2v1h-2zM12 0h2v1h-2zM16 0h2v1h-2zM20 0h2v1h-2zM24 0h2v1h-2zM1 1h2v1h-2zM5 1h2v1h-2zM9 1h2v1h-2zM13 1h2v1h-2zM17 1h2v1h-2zM21 1h2v1h-2zM25 1h2v1h-2zM2 2h2v1h-2zM6 2h2v1h-2zM10 2h2v1h-2zM14 2h2v1h-2zM18 2h2v1h-2zM22 2h2v1h-2zM26 2h1v1h-1zM0 3h1v1h-1zM3 3h2v1h-2zM7 3h2v1h-2zM11 3h2v1h-2zM15 3h2v1h-2zM19 3h2v1h-2zM23 3h2v1h-2zM0 4h2v1h-2zM4 4h2v1h-2zM8 4h2v1h-2zM12 4h2v1h-2zM16 4h2v1h-2zM20 4h2v1h-2zM24 4h2v1h-2zM1 5h2v1h-2zM5 5h2v1h-2zM9 5h2v1h-2zM13 5h2v1h-2zM17 5h2v1h-2zM21 5h2v1h-2zM25 5h2v1h-2zM2 6h2v1h-2zM6 6h2v1h-2zM10 6h2v1h-2zM14 6h2v1h-2zM18 6h2v1h-2zM22 6h2v1h-2zM26 6h1v1h-1zM0 7h1v1h-1zM3 7h2v1h-2zM7 7h2v1h-2zM11 7h2v1h-2zM15 7h2v1h-2zM19 7h2v1h-2zM23 7h2v1h-2zM0 8h2v1h-2zM4 8h2v1h-2zM8 8h2v1h-2zM12 8h2v1h-2zM16 8h2v1h-2zM20 8h2v1h-2zM24 8h2v1h-2zM1 9h2v1h-2zM5 9h2v1h-2zM9 9h2v1h-2zM13 9h2v1h-2zM17 9h2v1h-2zM21 9h2v1h-2zM25 9h2v1h-2zM2 10h2v1h-2zM6 10h2v1h-2zM10 10h2v1h-2zM14 10h2v1h-2zM18 10h2v1h-2zM22 10h2v1h-2zM26 10h1v1h-1zM0 11h1v1h-1zM3 11h2v1h-2zM7 11h2v1h-2zM11 11h2v1h-2zM15 11h2v1h-2zM19 11h2v1h-2zM23 11h2v1h-2zM0 12h2v1h-2zM4 12h2v1h-2zM8 12h2v1h-2zM12 12h2v1h-2zM16 12h2v1h-2zM20 12h2v1h-2zM24 12h2v1h-2zM1 13h2v1h-2zM5 13h2v1h-2zM9 13h2v1h-2zM13 13h2v1h-2zM17 13h2v1h-2zM21 13h2v1h-2zM25 13h2v1h-2zM2 14h2v1h-2zM6 14h2v1h-2zM10 14h2v1h-2zM14 14h2v1h-2zM18 14h2v1h-2zM22 14h2v1h-2zM26 14h1v1h-1zM0 15h1v1h-1zM3 15h2v1h-2zM7 15h2v1h-2zM11 15h2v1h-2zM15 15h2v1h-2zM19 15h2v1h-2zM23 15h2v1h-2zM0 16h2v1h-2zM4 16h2v1h-2zM8 16h2v1h-2zM12 16h2v1h-2zM16 16h2v1h-2zM20 16h2v1h-2zM24 16h2v1h-2zM1 17h2v1h-2zM5 17h2v1h-2zM9 17h2v1h-2zM13 17h2v1h-2zM17 17h2v1h-2zM21 17h2v1h-2zM25 17h2v1h-2zM2 18h2v1h-2zM6 18h2v1h-2zM10 18h2v1h-2zM14 18h2v1h-2zM18 18h2v1h-2zM22 18h2v1h-2zM26 18h1v1h-1z"/><path transform="translate(794.09 630.00) scale(1.1825)" d="M2 0h2v1h-2zM6 0h2v1h-2zM10 0h2v1h-2zM14 0h2v1h-2zM18 0h2v1h-2zM22 0h2v1h-2zM26 0h1v1h-1zM1 1h2v1h-2zM5 1h2v1h-2zM9 1h2v1h-2zM13 1h2v1h-2zM17 1h2v1h-2zM21 1h2v1h-2zM25 1h2v1h-2zM0 2h2v1h-2zM4 2h2v1h-2zM8 2h2v1h-2zM12 2h2v1h-2zM16 2h2v1h-2zM20 2h2v1h-2zM24 2h2v1h-2zM0 3h1v1h-1zM3 3h2v1h-2zM7 3h2v1h-2zM11 3h2v1h-2zM15 3h2v1h-2zM19 3h2v1h-2zM23 3h2v1h-2zM2 4h2v1h-2zM6 4h2v1h-2zM10 4h2v1h-2zM14 4h2v1h-2zM18 4h2v1h-2zM22 4h2v1h-2zM26 4h1v1h-1zM1 5h2v1h-2zM5 5h2v1h-2zM9 5h2v1h-2zM13 5h2v1h-2zM17 5h2v1h-2zM21 5h2v1h-2zM25 5h2v1h-2zM0 6h2v1h-2zM4 6h2v1h-2zM8 6h2v1h-2zM12 6h2v1h-2zM16 6h2v1h-2zM20 6h2v1h-2zM24 6h2v1h-2zM0 7h1v1h-1zM3 7h2v1h-2zM7 7h2v1h-2zM11 7h2v1h-2zM15 7h2v1h-2zM19 7h2v1h-2zM23 7h2v1h-2zM2 8h2v1h-2zM6 8h2v1h-2zM10 8h2v1h-2zM14 8h2v1h-2zM18 8h2v1h-2zM22 8h2v1h-2zM26 8h1v1h-1zM1 9h2v1h-2zM5 9h2v1h-2zM9 9h2v1h-2zM13 9h2v1h-2zM17 9h2v1h-2zM21 9h2v1h-2zM25 9h2v1h-2zM0 10h2v1h-2zM4 10h2v1h-2zM8 10h2v1h-2zM12 10h2v1h-2zM16 10h2v1h-2zM20 10h2v1h-2zM24 10h2v1h-2zM0 11h1v1h-1zM3 11h2v1h-2zM7 11h2v1h-2zM11 11h2v1h-2zM15 11h2v1h-2zM19 11h2v1h-2zM23 11h2v1h-2zM2 12h2v1h-2zM6 12h2v1h-2zM10 12h2v1h-2zM14 12h2v1h-2zM18 12h2v1h-2zM22 12h2v1h-2zM26 12h1v1h-1zM1 13h2v1h-2zM5 13h2v1h-2zM9 13h2v1h-2zM13 13h2v1h-2zM17 13h2v1h-2zM21 13h2v1h-2zM25 13h2v1h-2zM0 14h2v1h-2zM4 14h2v1h-2zM8 14h2v1h-2zM12 14h2v1h-2zM16 14h2v1h-2zM20 14h2v1h-2zM24 14h2v1h-2zM0 15h1v1h-1zM3 15h2v1h-2zM7 15h2v1h-2zM11 15h2v1h-2zM15 15h2v1h-2zM19 15h2v1h-2zM23 15h2v1h-2zM2 16h2v1h-2zM6 16h2v1h-2zM10 16h2v1h-2zM14 16h2v1h-2zM18 16h2v1h-2zM22 16h2v1h-2zM26 16h1v1h-1zM1 17h2v1h-2zM5 17h2v1h-2zM9 17h2v1h-2zM13 17h2v1h-2zM17 17h2v1h-2zM21 17h2v1h-2zM25 17h2v1h-2zM0 18h2v1h-2zM4 18h2v1h-2zM8 18h2v1h-2zM12 18h2v1h-2zM16 18h2v1h-2zM20 18h2v1h-2zM24 18h2v1h-2z"/><path transform="translate(833.52 630.00) scale(1.1825)" d="M0 0h2v1h-2zM7 0h3v1h-3zM15 0h3v1h-3zM23 0h3v1h-3zM0 1h3v1h-3zM8 1h3v1h-3zM16 1h3v1h-3zM24 1h3v1h-3zM1 2h3v1h-3zM9 2h3v1h-3zM17 2h3v1h-3zM25 2h2v1h-2zM2 3h3v1h-3zM10 3h3v1h-3zM18 3h3v1h-3zM26 3h1v1h-1zM3 4h3v1h-3zM11 4h3v1h-3zM19 4h3v1h-3zM4 5h3v1h-3zM12 5h3v1h-3zM20 5h3v1h-3zM5 6h3v1h-3zM13 6h3v1h-3zM21 6h3v1h-3zM0 7h1v1h-1zM6 7h3v1h-3zM14 7h3v1h-3zM22 7h3v1h-3zM0 8h2v1h-2zM7 8h3v1h-3zM15 8h3v1h-3zM23 8h3v1h-3zM0 9h3v1h-3zM8 9h3v1h-3zM16 9h3v1h-3zM24 9h3v1h-3zM1 10h3v1h-3zM9 10h3v1h-3zM17 10h3v1h-3zM25 10h2v1h-2zM2 11h3v1h-3zM10 11h3v1h-3zM18 11h3v1h-3zM26 11h1v1h-1zM3 12h3v1h-3zM11 12h3v1h-3zM19 12h3v1h-3zM4 13h3v1h-3zM12 13h3v1h-3zM20 13h3v1h-3zM5 14h3v1h-3zM13 14h3v1h-3zM21 14h3v1h-3zM0 15h1v1h-1zM6 15h3v1h-3zM14 15h3v1h-3zM22 15h3v1h-3zM0 16h2v1h-2zM7 16h3v1h-3zM15 16h3v1h-3zM23 16h3v1h-3zM0 17h3v1h-3zM8 17h3v1h-3zM16 17h3v1h-3zM24 17h3v1h-3zM1 18h3v1h-3zM9 18h3v1h-3zM17 18h3v1h-3zM25 18h2v1h-2z"/><path transform="translate(872.95 630.00) scale(1.1825)" d="M0 0h1v1h-1zM6 0h3v1h-3zM14 0h3v1h-3zM22 0h3v1h-3zM5 1h3v1h-3zM13 1h3v1h-3zM21 1h3v1h-3zM4 2h3v1h-3zM12 2h3v1h-3zM20 2h3v1h-3zM3 3h3v1h-3zM11 3h3v1h-3zM19 3h3v1h-3zM2 4h3v1h-3zM10 4h3v1h-3zM18 4h3v1h-3zM26 4h1v1h-1zM1 5h3v1h-3zM9 5h3v1h-3zM17 5h3v1h-3zM25 5h2v1h-2zM0 6h3v1h-3zM8 6h3v1h-3zM16 6h3v1h-3zM24 6h3v1h-3zM0 7h2v1h-2zM7 7h3v1h-3zM15 7h3v1h-3zM23 7h3v1h-3zM0 8h1v1h-1zM6 8h3v1h-3zM14 8h3v1h-3zM22 8h3v1h-3zM5 9h3v1h-3zM13 9h3v1h-3zM21 9h3v1h-3zM4 10h3v1h-3zM12 10h3v1h-3zM20 10h3v1h-3zM3 11h3v1h-3zM11 11h3v1h-3zM19 11h3v1h-3zM2 12h3v1h-3zM10 12h3v1h-3zM18 12h3v1h-3zM26 12h1v1h-1zM1 13h3v1h-3zM9 13h3v1h-3zM17 13h3v1h-3zM25 13h2v1h-2zM0 14h3v1h-3zM8 14h3v1h-3zM16 14h3v1h-3zM24 14h3v1h-3zM0 15h2v1h-2zM7 15h3v1h-3zM15 15h3v1h-3zM23 15h3v1h-3zM0 16h1v1h-1zM6 16h3v1h-3zM14 16h3v1h-3zM22 16h3v1h-3zM5 17h3v1h-3zM13 17h3v1h-3zM21 17h3v1h-3zM4 18h3v1h-3zM12 18h3v1h-3zM20 18h3v1h-3z"/><path transform="translate(675.80 660.05) scale(1.1825)" d="M0 0v19h1v-19zM4 0v19h1v-19zM8 0v19h1v-19zM12 0v19h1v-19zM16 0v19h1v-19zM20 0v19h1v-19zM24 0v19h1v-19z"/><path transform="translate(715.23 660.05) scale(1.1825)" d="M0 0h27v1h-27zM0 4h27v1h-27zM0 8h27v1h-27zM0 12h27v1h-27zM0 16h27v1h-27z"/><path transform="translate(754.66 660.05) scale(1.1825)" d="M0 0v19h1v-19zM2 0v19h1v-19zM4 0v19h1v-19zM6 0v19h1v-19zM8 0v19h1v-19zM10 0v19h1v-19zM12 0v19h1v-19zM14 0v19h1v-19zM16 0v19h1v-19zM18 0v19h1v-19zM20 0v19h1v-19zM22 0v19h1v-19zM24 0v19h1v-19zM26 0v19h1v-19z"/><path transform="translate(794.09 660.05) scale(1.1825)" d="M0 0h27v1h-27zM0 2h27v1h-27zM0 4h27v1h-27zM0 6h27v1h-27zM0 8h27v1h-27zM0 10h27v1h-27zM0 12h27v1h-27zM0 14h27v1h-27zM0 16h27v1h-27zM0 18h27v1h-27z"/><path transform="translate(833.52 660.05) scale(1.1825)" d="M0 0v19h1v-19zM1 0v19h1v-19zM4 0v19h1v-19zM5 0v19h1v-19zM8 0v19h1v-19zM9 0v19h1v-19zM12 0v19h1v-19zM13 0v19h1v-19zM16 0v19h1v-19zM17 0v19h1v-19zM20 0v19h1v-19zM21 0v19h1v-19zM24 0v19h1v-19zM25 0v19h1v-19z"/><path transform="translate(872.95 660.05) scale(1.1825)" d="M0 0h27v1h-27zM0 1h27v1h-27zM0 4h27v1h-27zM0 5h27v1h-27zM0 8h27v1h-27zM0 9h27v1h-27zM0 12h27v1h-27zM0 13h27v1h-27zM0 16h27v1h-27zM0 17h27v1h-27z"/><path transform="translate(675.80 690.10) scale(1.1825)" stroke="#000" stroke-width=".22" stroke-linejoin="round" d="M0 2h1v1h-1zM4 2h1v1h-1zM8 2h1v1h-1zM12 2h1v1h-1zM16 2h1v1h-1zM20 2h1v1h-1zM24 2h1v1h-1zM1 3h1v1h-1zM5 3h1v1h-1zM9 3h1v1h-1zM13 3h1v1h-1zM17 3h1v1h-1zM21 3h1v1h-1zM25 3h1v1h-1zM2 4h1v1h-1zM6 4h1v1h-1zM10 4h1v1h-1zM14 4h1v1h-1zM18 4h1v1h-1zM22 4h1v1h-1zM26 4h1v1h-1zM3 5h1v1h-1zM7 5h1v1h-1zM11 5h1v1h-1zM15 5h1v1h-1zM19 5h1v1h-1zM23 5h1v1h-1zM0 10h1v1h-1zM4 10h1v1h-1zM8 10h1v1h-1zM12 10h1v1h-1zM16 10h1v1h-1zM20 10h1v1h-1zM24 10h1v1h-1zM1 11h1v1h-1zM5 11h1v1h-1zM9 11h1v1h-1zM13 11h1v1h-1zM17 11h1v1h-1zM21 11h1v1h-1zM25 11h1v1h-1zM2 12h1v1h-1zM6 12h1v1h-1zM10 12h1v1h-1zM14 12h1v1h-1zM18 12h1v1h-1zM22 12h1v1h-1zM26 12h1v1h-1zM3 13h1v1h-1zM7 13h1v1h-1zM11 13h1v1h-1zM15 13h1v1h-1zM19 13h1v1h-1zM23 13h1v1h-1zM0 18h1v1h-1zM4 18h1v1h-1zM8 18h1v1h-1zM12 18h1v1h-1zM16 18h1v1h-1zM20 18h1v1h-1zM24 18h1v1h-1z"/><path transform="translate(715.23 690.10) scale(1.1825)" stroke="#000" stroke-width=".22" stroke-linejoin="round" d="M3 2h1v1h-1zM7 2h1v1h-1zM11 2h1v1h-1zM15 2h1v1h-1zM19 2h1v1h-1zM23 2h1v1h-1zM2 3h1v1h-1zM6 3h1v1h-1zM10 3h1v1h-1zM14 3h1v1h-1zM18 3h1v1h-1zM22 3h1v1h-1zM26 3h1v1h-1zM1 4h1v1h-1zM5 4h1v1h-1zM9 4h1v1h-1zM13 4h1v1h-1zM17 4h1v1h-1zM21 4h1v1h-1zM25 4h1v1h-1zM0 5h1v1h-1zM4 5h1v1h-1zM8 5h1v1h-1zM12 5h1v1h-1zM16 5h1v1h-1zM20 5h1v1h-1zM24 5h1v1h-1zM3 10h1v1h-1zM7 10h1v1h-1zM11 10h1v1h-1zM15 10h1v1h-1zM19 10h1v1h-1zM23 10h1v1h-1zM2 11h1v1h-1zM6 11h1v1h-1zM10 11h1v1h-1zM14 11h1v1h-1zM18 11h1v1h-1zM22 11h1v1h-1zM26 11h1v1h-1zM1 12h1v1h-1zM5 12h1v1h-1zM9 12h1v1h-1zM13 12h1v1h-1zM17 12h1v1h-1zM21 12h1v1h-1zM25 12h1v1h-1zM0 13h1v1h-1zM4 13h1v1h-1zM8 13h1v1h-1zM12 13h1v1h-1zM16 13h1v1h-1zM20 13h1v1h-1zM24 13h1v1h-1zM3 18h1v1h-1zM7 18h1v1h-1zM11 18h1v1h-1zM15 18h1v1h-1zM19 18h1v1h-1zM23 18h1v1h-1z"/><path transform="translate(754.66 690.10) scale(1.1825)" d="M0 0h4v1h-4zM8 0h4v1h-4zM16 0h4v1h-4zM24 0h3v1h-3zM4 4h4v1h-4zM12 4h4v1h-4zM20 4h4v1h-4zM0 8h4v1h-4zM8 8h4v1h-4zM16 8h4v1h-4zM24 8h3v1h-3zM4 12h4v1h-4zM12 12h4v1h-4zM20 12h4v1h-4zM0 16h4v1h-4zM8 16h4v1h-4zM16 16h4v1h-4zM24 16h3v1h-3z"/><path transform="translate(794.09 690.10) scale(1.1825)" d="M0 0v4h1v-4zM0 8v4h1v-4zM0 16v3h1v-3zM4 4v4h1v-4zM4 12v4h1v-4zM8 0v4h1v-4zM8 8v4h1v-4zM8 16v3h1v-3zM12 4v4h1v-4zM12 12v4h1v-4zM16 0v4h1v-4zM16 8v4h1v-4zM16 16v3h1v-3zM20 4v4h1v-4zM20 12v4h1v-4zM24 0v4h1v-4zM24 8v4h1v-4zM24 16v3h1v-3z"/><path transform="translate(833.52 690.10) scale(1.1825)" d="M0 0h1v1h-1zM8 0h1v1h-1zM16 0h1v1h-1zM24 0h1v1h-1zM3 1h1v1h-1zM11 1h1v1h-1zM19 1h1v1h-1zM6 2h1v1h-1zM14 2h1v1h-1zM22 2h1v1h-1zM1 3h1v1h-1zM9 3h1v1h-1zM17 3h1v1h-1zM25 3h1v1h-1zM5 4h1v1h-1zM13 4h1v1h-1zM21 4h1v1h-1zM2 5h1v1h-1zM10 5h1v1h-1zM18 5h1v1h-1zM26 5h1v1h-1zM7 6h1v1h-1zM15 6h1v1h-1zM23 6h1v1h-1zM4 7h1v1h-1zM12 7h1v1h-1zM20 7h1v1h-1zM0 8h1v1h-1zM8 8h1v1h-1zM16 8h1v1h-1zM24 8h1v1h-1zM3 9h1v1h-1zM11 9h1v1h-1zM19 9h1v1h-1zM6 10h1v1h-1zM14 10h1v1h-1zM22 10h1v1h-1zM1 11h1v1h-1zM9 11h1v1h-1zM17 11h1v1h-1zM25 11h1v1h-1zM5 12h1v1h-1zM13 12h1v1h-1zM21 12h1v1h-1zM2 13h1v1h-1zM10 13h1v1h-1zM18 13h1v1h-1zM26 13h1v1h-1zM7 14h1v1h-1zM15 14h1v1h-1zM23 14h1v1h-1zM4 15h1v1h-1zM12 15h1v1h-1zM20 15h1v1h-1zM0 16h1v1h-1zM8 16h1v1h-1zM16 16h1v1h-1zM24 16h1v1h-1zM3 17h1v1h-1zM11 17h1v1h-1zM19 17h1v1h-1zM6 18h1v1h-1zM14 18h1v1h-1zM22 18h1v1h-1z"/><path transform="translate(872.95 690.10) scale(1.1825)" d="M0 0h1v1h-1zM2 0h2v1h-2zM7 0h2v1h-2zM10 0h2v1h-2zM15 0h2v1h-2zM18 0h2v1h-2zM23 0h2v1h-2zM26 0h1v1h-1zM2 1h2v1h-2zM10 1h2v1h-2zM18 1h2v1h-2zM26 1h1v1h-1zM6 2h2v1h-2zM14 2h2v1h-2zM22 2h2v1h-2zM3 3h2v1h-2zM6 3h2v1h-2zM11 3h2v1h-2zM14 3h2v1h-2zM19 3h2v1h-2zM22 3h2v1h-2zM0 4h2v1h-2zM3 4h2v1h-2zM8 4h2v1h-2zM11 4h2v1h-2zM16 4h2v1h-2zM19 4h2v1h-2zM24 4h2v1h-2zM0 5h2v1h-2zM8 5h2v1h-2zM16 5h2v1h-2zM24 5h2v1h-2zM4 6h2v1h-2zM12 6h2v1h-2zM20 6h2v1h-2zM0 7h1v1h-1zM4 7h2v1h-2zM7 7h2v1h-2zM12 7h2v1h-2zM15 7h2v1h-2zM20 7h2v1h-2zM23 7h2v1h-2zM0 8h1v1h-1zM2 8h2v1h-2zM7 8h2v1h-2zM10 8h2v1h-2zM15 8h2v1h-2zM18 8h2v1h-2zM23 8h2v1h-2zM26 8h1v1h-1zM2 9h2v1h-2zM10 9h2v1h-2zM18 9h2v1h-2zM26 9h1v1h-1zM6 10h2v1h-2zM14 10h2v1h-2zM22 10h2v1h-2zM3 11h2v1h-2zM6 11h2v1h-2zM11 11h2v1h-2zM14 11h2v1h-2zM19 11h2v1h-2zM22 11h2v1h-2zM0 12h2v1h-2zM3 12h2v1h-2zM8 12h2v1h-2zM11 12h2v1h-2zM16 12h2v1h-2zM19 12h2v1h-2zM24 12h2v1h-2zM0 13h2v1h-2zM8 13h2v1h-2zM16 13h2v1h-2zM24 13h2v1h-2zM4 14h2v1h-2zM12 14h2v1h-2zM20 14h2v1h-2zM0 15h1v1h-1zM4 15h2v1h-2zM7 15h2v1h-2zM12 15h2v1h-2zM15 15h2v1h-2zM20 15h2v1h-2zM23 15h2v1h-2zM0 16h1v1h-1zM2 16h2v1h-2zM7 16h2v1h-2zM10 16h2v1h-2zM15 16h2v1h-2zM18 16h2v1h-2zM23 16h2v1h-2zM26 16h1v1h-1zM2 17h2v1h-2zM10 17h2v1h-2zM18 17h2v1h-2zM26 17h1v1h-1zM6 18h2v1h-2zM14 18h2v1h-2zM22 18h2v1h-2z"/><path transform="translate(675.80 720.15) scale(1.1825)" stroke="#000" stroke-width=".22" stroke-linejoin="round" d="M0 0h1v1h-1zM7 0h2v1h-2zM15 0h2v1h-2zM23 0h2v1h-2zM1 1h1v1h-1zM6 1h1v1h-1zM9 1h1v1h-1zM14 1h1v1h-1zM17 1h1v1h-1zM22 1h1v1h-1zM25 1h1v1h-1zM2 2h1v1h-1zM5 2h1v1h-1zM10 2h1v1h-1zM13 2h1v1h-1zM18 2h1v1h-1zM21 2h1v1h-1zM26 2h1v1h-1zM3 3h2v1h-2zM11 3h2v1h-2zM19 3h2v1h-2zM0 4h1v1h-1zM7 4h2v1h-2zM15 4h2v1h-2zM23 4h2v1h-2zM1 5h1v1h-1zM6 5h1v1h-1zM9 5h1v1h-1zM14 5h1v1h-1zM17 5h1v1h-1zM22 5h1v1h-1zM25 5h1v1h-1zM2 6h1v1h-1zM5 6h1v1h-1zM10 6h1v1h-1zM13 6h1v1h-1zM18 6h1v1h-1zM21 6h1v1h-1zM26 6h1v1h-1zM3 7h2v1h-2zM11 7h2v1h-2zM19 7h2v1h-2zM0 8h1v1h-1zM7 8h2v1h-2zM15 8h2v1h-2zM23 8h2v1h-2zM1 9h1v1h-1zM6 9h1v1h-1zM9 9h1v1h-1zM14 9h1v1h-1zM17 9h1v1h-1zM22 9h1v1h-1zM25 9h1v1h-1zM2 10h1v1h-1zM5 10h1v1h-1zM10 10h1v1h-1zM13 10h1v1h-1zM18 10h1v1h-1zM21 10h1v1h-1zM26 10h1v1h-1zM3 11h2v1h-2zM11 11h2v1h-2zM19 11h2v1h-2zM0 12h1v1h-1zM7 12h2v1h-2zM15 12h2v1h-2zM23 12h2v1h-2zM1 13h1v1h-1zM6 13h1v1h-1zM9 13h1v1h-1zM14 13h1v1h-1zM17 13h1v1h-1zM22 13h1v1h-1zM25 13h1v1h-1zM2 14h1v1h-1zM5 14h1v1h-1zM10 14h1v1h-1zM13 14h1v1h-1zM18 14h1v1h-1zM21 14h1v1h-1zM26 14h1v1h-1zM3 15h2v1h-2zM11 15h2v1h-2zM19 15h2v1h-2zM0 16h1v1h-1zM7 16h2v1h-2zM15 16h2v1h-2zM23 16h2v1h-2zM1 17h1v1h-1zM6 17h1v1h-1zM9 17h1v1h-1zM14 17h1v1h-1zM17 17h1v1h-1zM22 17h1v1h-1zM25 17h1v1h-1zM2 18h1v1h-1zM5 18h1v1h-1zM10 18h1v1h-1zM13 18h1v1h-1zM18 18h1v1h-1zM21 18h1v1h-1zM26 18h1v1h-1z"/><path transform="translate(715.23 720.15) scale(1.1825)" stroke="#000" stroke-width=".22" stroke-linejoin="round" d="M3 1h2v1h-2zM11 1h2v1h-2zM19 1h2v1h-2zM0 2h1v1h-1zM2 2h1v1h-1zM5 2h1v1h-1zM8 2h1v1h-1zM10 2h1v1h-1zM13 2h1v1h-1zM16 2h1v1h-1zM18 2h1v1h-1zM21 2h1v1h-1zM24 2h1v1h-1zM26 2h1v1h-1zM6 3h2v1h-2zM14 3h2v1h-2zM22 3h2v1h-2zM3 5h2v1h-2zM11 5h2v1h-2zM19 5h2v1h-2zM0 6h1v1h-1zM2 6h1v1h-1zM5 6h1v1h-1zM8 6h1v1h-1zM10 6h1v1h-1zM13 6h1v1h-1zM16 6h1v1h-1zM18 6h1v1h-1zM21 6h1v1h-1zM24 6h1v1h-1zM26 6h1v1h-1zM6 7h2v1h-2zM14 7h2v1h-2zM22 7h2v1h-2zM3 9h2v1h-2zM11 9h2v1h-2zM19 9h2v1h-2zM0 10h1v1h-1zM2 10h1v1h-1zM5 10h1v1h-1zM8 10h1v1h-1zM10 10h1v1h-1zM13 10h1v1h-1zM16 10h1v1h-1zM18 10h1v1h-1zM21 10h1v1h-1zM24 10h1v1h-1zM26 10h1v1h-1zM6 11h2v1h-2zM14 11h2v1h-2zM22 11h2v1h-2zM3 13h2v1h-2zM11 13h2v1h-2zM19 13h2v1h-2zM0 14h1v1h-1zM2 14h1v1h-1zM5 14h1v1h-1zM8 14h1v1h-1zM10 14h1v1h-1zM13 14h1v1h-1zM16 14h1v1h-1zM18 14h1v1h-1zM21 14h1v1h-1zM24 14h1v1h-1zM26 14h1v1h-1zM6 15h2v1h-2zM14 15h2v1h-2zM22 15h2v1h-2zM3 17h2v1h-2zM11 17h2v1h-2zM19 17h2v1h-2zM0 18h1v1h-1zM2 18h1v1h-1zM5 18h1v1h-1zM8 18h1v1h-1zM10 18h1v1h-1zM13 18h1v1h-1zM16 18h1v1h-1zM18 18h1v1h-1zM21 18h1v1h-1zM24 18h1v1h-1zM26 18h1v1h-1z"/><path transform="translate(754.66 720.15) scale(1.1825)" stroke="#000" stroke-width=".22" stroke-linejoin="round" d="M7 0h1v1h-1zM15 0h1v1h-1zM23 0h1v1h-1zM6 1h1v1h-1zM14 1h1v1h-1zM22 1h1v1h-1zM5 2h1v1h-1zM13 2h1v1h-1zM21 2h1v1h-1zM4 3h1v1h-1zM12 3h1v1h-1zM20 3h1v1h-1zM3 4h2v1h-2zM11 4h2v1h-2zM19 4h2v1h-2zM2 5h1v1h-1zM5 5h1v1h-1zM10 5h1v1h-1zM13 5h1v1h-1zM18 5h1v1h-1zM21 5h1v1h-1zM26 5h1v1h-1zM1 6h1v1h-1zM6 6h1v1h-1zM9 6h1v1h-1zM14 6h1v1h-1zM17 6h1v1h-1zM22 6h1v1h-1zM25 6h1v1h-1zM0 7h1v1h-1zM7 7h2v1h-2zM15 7h2v1h-2zM23 7h2v1h-2zM7 8h1v1h-1zM15 8h1v1h-1zM23 8h1v1h-1zM6 9h1v1h-1zM14 9h1v1h-1zM22 9h1v1h-1zM5 10h1v1h-1zM13 10h1v1h-1zM21 10h1v1h-1zM4 11h1v1h-1zM12 11h1v1h-1zM20 11h1v1h-1zM3 12h2v1h-2zM11 12h2v1h-2zM19 12h2v1h-2zM2 13h1v1h-1zM5 13h1v1h-1zM10 13h1v1h-1zM13 13h1v1h-1zM18 13h1v1h-1zM21 13h1v1h-1zM26 13h1v1h-1zM1 14h1v1h-1zM6 14h1v1h-1zM9 14h1v1h-1zM14 14h1v1h-1zM17 14h1v1h-1zM22 14h1v1h-1zM25 14h1v1h-1zM0 15h1v1h-1zM7 15h2v1h-2zM15 15h2v1h-2zM23 15h2v1h-2zM7 16h1v1h-1zM15 16h1v1h-1zM23 16h1v1h-1zM6 17h1v1h-1zM14 17h1v1h-1zM22 17h1v1h-1zM5 18h1v1h-1zM13 18h1v1h-1zM21 18h1v1h-1z"/><path transform="translate(794.09 720.15) scale(1.1825)" d="M0 0h27v1h-27zM0 1h1v1h-1zM8 1h1v1h-1zM16 1h1v1h-1zM24 1h1v1h-1zM0 2h1v1h-1zM8 2h1v1h-1zM16 2h1v1h-1zM24 2h1v1h-1zM0 3h1v1h-1zM8 3h1v1h-1zM16 3h1v1h-1zM24 3h1v1h-1zM0 4h27v1h-27zM4 5h1v1h-1zM12 5h1v1h-1zM20 5h1v1h-1zM4 6h1v1h-1zM12 6h1v1h-1zM20 6h1v1h-1zM4 7h1v1h-1zM12 7h1v1h-1zM20 7h1v1h-1zM0 8h27v1h-27zM0 9h1v1h-1zM8 9h1v1h-1zM16 9h1v1h-1zM24 9h1v1h-1zM0 10h1v1h-1zM8 10h1v1h-1zM16 10h1v1h-1zM24 10h1v1h-1zM0 11h1v1h-1zM8 11h1v1h-1zM16 11h1v1h-1zM24 11h1v1h-1zM0 12h27v1h-27zM4 13h1v1h-1zM12 13h1v1h-1zM20 13h1v1h-1zM4 14h1v1h-1zM12 14h1v1h-1zM20 14h1v1h-1zM4 15h1v1h-1zM12 15h1v1h-1zM20 15h1v1h-1zM0 16h27v1h-27zM0 17h1v1h-1zM8 17h1v1h-1zM16 17h1v1h-1zM24 17h1v1h-1zM0 18h1v1h-1zM8 18h1v1h-1zM16 18h1v1h-1zM24 18h1v1h-1z"/><path transform="translate(833.52 720.15) scale(1.1825)" stroke="#000" stroke-width=".22" stroke-linejoin="round" d="M0 0h1v1h-1zM4 0h1v1h-1zM8 0h1v1h-1zM12 0h1v1h-1zM16 0h1v1h-1zM20 0h1v1h-1zM24 0h1v1h-1zM1 1h1v1h-1zM3 1h1v1h-1zM5 1h1v1h-1zM9 1h1v1h-1zM11 1h1v1h-1zM13 1h1v1h-1zM17 1h1v1h-1zM19 1h1v1h-1zM21 1h1v1h-1zM25 1h1v1h-1zM2 2h1v1h-1zM6 2h1v1h-1zM10 2h1v1h-1zM14 2h1v1h-1zM18 2h1v1h-1zM22 2h1v1h-1zM26 2h1v1h-1zM1 3h1v1h-1zM5 3h1v1h-1zM7 3h1v1h-1zM9 3h1v1h-1zM13 3h1v1h-1zM15 3h1v1h-1zM17 3h1v1h-1zM21 3h1v1h-1zM23 3h1v1h-1zM25 3h1v1h-1zM0 4h1v1h-1zM4 4h1v1h-1zM8 4h1v1h-1zM12 4h1v1h-1zM16 4h1v1h-1zM20 4h1v1h-1zM24 4h1v1h-1zM3 5h1v1h-1zM5 5h1v1h-1zM11 5h1v1h-1zM13 5h1v1h-1zM19 5h1v1h-1zM21 5h1v1h-1zM2 6h1v1h-1zM6 6h1v1h-1zM10 6h1v1h-1zM14 6h1v1h-1zM18 6h1v1h-1zM22 6h1v1h-1zM26 6h1v1h-1zM1 7h1v1h-1zM3 7h1v1h-1zM7 7h1v1h-1zM9 7h1v1h-1zM11 7h1v1h-1zM15 7h1v1h-1zM17 7h1v1h-1zM19 7h1v1h-1zM23 7h1v1h-1zM25 7h1v1h-1zM0 8h1v1h-1zM4 8h1v1h-1zM8 8h1v1h-1zM12 8h1v1h-1zM16 8h1v1h-1zM20 8h1v1h-1zM24 8h1v1h-1zM1 9h1v1h-1zM3 9h1v1h-1zM5 9h1v1h-1zM9 9h1v1h-1zM11 9h1v1h-1zM13 9h1v1h-1zM17 9h1v1h-1zM19 9h1v1h-1zM21 9h1v1h-1zM25 9h1v1h-1zM2 10h1v1h-1zM6 10h1v1h-1zM10 10h1v1h-1zM14 10h1v1h-1zM18 10h1v1h-1zM22 10h1v1h-1zM26 10h1v1h-1zM1 11h1v1h-1zM5 11h1v1h-1zM7 11h1v1h-1zM9 11h1v1h-1zM13 11h1v1h-1zM15 11h1v1h-1zM17 11h1v1h-1zM21 11h1v1h-1zM23 11h1v1h-1zM25 11h1v1h-1zM0 12h1v1h-1zM4 12h1v1h-1zM8 12h1v1h-1zM12 12h1v1h-1zM16 12h1v1h-1zM20 12h1v1h-1zM24 12h1v1h-1zM3 13h1v1h-1zM5 13h1v1h-1zM11 13h1v1h-1zM13 13h1v1h-1zM19 13h1v1h-1zM21 13h1v1h-1zM2 14h1v1h-1zM6 14h1v1h-1zM10 14h1v1h-1zM14 14h1v1h-1zM18 14h1v1h-1zM22 14h1v1h-1zM26 14h1v1h-1zM1 15h1v1h-1zM3 15h1v1h-1zM7 15h1v1h-1zM9 15h1v1h-1zM11 15h1v1h-1zM15 15h1v1h-1zM17 15h1v1h-1zM19 15h1v1h-1zM23 15h1v1h-1zM25 15h1v1h-1zM0 16h1v1h-1zM4 16h1v1h-1zM8 16h1v1h-1zM12 16h1v1h-1zM16 16h1v1h-1zM20 16h1v1h-1zM24 16h1v1h-1zM1 17h1v1h-1zM3 17h1v1h-1zM5 17h1v1h-1zM9 17h1v1h-1zM11 17h1v1h-1zM13 17h1v1h-1zM17 17h1v1h-1zM19 17h1v1h-1zM21 17h1v1h-1zM25 17h1v1h-1zM2 18h1v1h-1zM6 18h1v1h-1zM10 18h1v1h-1zM14 18h1v1h-1zM18 18h1v1h-1zM22 18h1v1h-1zM26 18h1v1h-1z"/><path transform="translate(872.95 720.15) scale(1.1825)" d="M0 0v1h1v-1zM0 2v1h1v-1zM0 4v5h1v-5zM0 10v1h1v-1zM0 12v5h1v-5zM0 18v1h1v-1zM1 1v1h1v-1zM1 3v5h1v-5zM1 9v1h1v-1zM1 11v5h1v-5zM1 17v1h1v-1zM2 0v1h1v-1zM2 2v1h1v-1zM2 4v5h1v-5zM2 10v1h1v-1zM2 12v5h1v-5zM2 18v1h1v-1zM3 1v1h1v-1zM3 3v5h1v-5zM3 9v1h1v-1zM3 11v5h1v-5zM3 17v1h1v-1zM4 0v1h1v-1zM4 2v1h1v-1zM4 8v1h1v-1zM4 10v1h1v-1zM4 16v1h1v-1zM4 18v1h1v-1zM5 1v1h1v-1zM5 3v1h1v-1zM5 9v1h1v-1zM5 11v1h1v-1zM5 17v1h1v-1zM6 0v1h1v-1zM6 2v1h1v-1zM6 8v1h1v-1zM6 10v1h1v-1zM6 16v1h1v-1zM6 18v1h1v-1zM7 1v1h1v-1zM7 3v1h1v-1zM7 9v1h1v-1zM7 11v1h1v-1zM7 17v1h1v-1zM8 0v1h1v-1zM8 2v1h1v-1zM8 4v5h1v-5zM8 10v1h1v-1zM8 12v5h1v-5zM8 18v1h1v-1zM9 1v1h1v-1zM9 3v5h1v-5zM9 9v1h1v-1zM9 11v5h1v-5zM9 17v1h1v-1zM10 0v1h1v-1zM10 2v1h1v-1zM10 4v5h1v-5zM10 10v1h1v-1zM10 12v5h1v-5zM10 18v1h1v-1zM11 1v1h1v-1zM11 3v5h1v-5zM11 9v1h1v-1zM11 11v5h1v-5zM11 17v1h1v-1zM12 0v1h1v-1zM12 2v1h1v-1zM12 8v1h1v-1zM12 10v1h1v-1zM12 16v1h1v-1zM12 18v1h1v-1zM13 1v1h1v-1zM13 3v1h1v-1zM13 9v1h1v-1zM13 11v1h1v-1zM13 17v1h1v-1zM14 0v1h1v-1zM14 2v1h1v-1zM14 8v1h1v-1zM14 10v1h1v-1zM14 16v1h1v-1zM14 18v1h1v-1zM15 1v1h1v-1zM15 3v1h1v-1zM15 9v1h1v-1zM15 11v1h1v-1zM15 17v1h1v-1zM16 0v1h1v-1zM16 2v1h1v-1zM16 4v5h1v-5zM16 10v1h1v-1zM16 12v5h1v-5zM16 18v1h1v-1zM17 1v1h1v-1zM17 3v5h1v-5zM17 9v1h1v-1zM17 11v5h1v-5zM17 17v1h1v-1zM18 0v1h1v-1zM18 2v1h1v-1zM18 4v5h1v-5zM18 10v1h1v-1zM18 12v5h1v-5zM18 18v1h1v-1zM19 1v1h1v-1zM19 3v5h1v-5zM19 9v1h1v-1zM19 11v5h1v-5zM19 17v1h1v-1zM20 0v1h1v-1zM20 2v1h1v-1zM20 8v1h1v-1zM20 10v1h1v-1zM20 16v1h1v-1zM20 18v1h1v-1zM21 1v1h1v-1zM21 3v1h1v-1zM21 9v1h1v-1zM21 11v1h1v-1zM21 17v1h1v-1zM22 0v1h1v-1zM22 2v1h1v-1zM22 8v1h1v-1zM22 10v1h1v-1zM22 16v1h1v-1zM22 18v1h1v-1zM23 1v1h1v-1zM23 3v1h1v-1zM23 9v1h1v-1zM23 11v1h1v-1zM23 17v1h1v-1zM24 0v1h1v-1zM24 2v1h1v-1zM24 4v5h1v-5zM24 10v1h1v-1zM24 12v5h1v-5zM24 18v1h1v-1zM25 1v1h1v-1zM25 3v5h1v-5zM25 9v1h1v-1zM25 11v5h1v-5zM25 17v1h1v-1zM26 0v1h1v-1zM26 2v1h1v-1zM26 4v5h1v-5zM26 10v1h1v-1zM26 12v5h1v-5zM26 18v1h1v-1z"/><path transform="translate(675.80 750.20) scale(1.1825)" stroke="#000" stroke-width=".22" stroke-linejoin="round" d="M3 1h1v1h-1zM11 1h1v1h-1zM19 1h1v1h-1zM4 2h1v1h-1zM12 2h1v1h-1zM20 2h1v1h-1zM3 3h1v1h-1zM11 3h1v1h-1zM19 3h1v1h-1zM0 5h1v1h-1zM8 5h1v1h-1zM16 5h1v1h-1zM24 5h1v1h-1zM7 6h1v1h-1zM15 6h1v1h-1zM23 6h1v1h-1zM0 7h1v1h-1zM8 7h1v1h-1zM16 7h1v1h-1zM24 7h1v1h-1zM3 9h1v1h-1zM11 9h1v1h-1zM19 9h1v1h-1zM4 10h1v1h-1zM12 10h1v1h-1zM20 10h1v1h-1zM3 11h1v1h-1zM11 11h1v1h-1zM19 11h1v1h-1zM0 13h1v1h-1zM8 13h1v1h-1zM16 13h1v1h-1zM24 13h1v1h-1zM7 14h1v1h-1zM15 14h1v1h-1zM23 14h1v1h-1zM0 15h1v1h-1zM8 15h1v1h-1zM16 15h1v1h-1zM24 15h1v1h-1zM3 17h1v1h-1zM11 17h1v1h-1zM19 17h1v1h-1zM4 18h1v1h-1zM12 18h1v1h-1zM20 18h1v1h-1z"/><path transform="translate(715.23 750.20) scale(1.1825)" d="M0 0h1v1h-1zM2 0h1v1h-1zM4 0h1v1h-1zM6 0h1v1h-1zM8 0h1v1h-1zM10 0h1v1h-1zM12 0h1v1h-1zM14 0h1v1h-1zM16 0h1v1h-1zM18 0h1v1h-1zM20 0h1v1h-1zM22 0h1v1h-1zM24 0h1v1h-1zM26 0h1v1h-1zM0 2h1v1h-1zM8 2h1v1h-1zM16 2h1v1h-1zM24 2h1v1h-1zM0 4h1v1h-1zM8 4h1v1h-1zM16 4h1v1h-1zM24 4h1v1h-1zM0 6h1v1h-1zM8 6h1v1h-1zM16 6h1v1h-1zM24 6h1v1h-1zM0 8h1v1h-1zM2 8h1v1h-1zM4 8h1v1h-1zM6 8h1v1h-1zM8 8h1v1h-1zM10 8h1v1h-1zM12 8h1v1h-1zM14 8h1v1h-1zM16 8h1v1h-1zM18 8h1v1h-1zM20 8h1v1h-1zM22 8h1v1h-1zM24 8h1v1h-1zM26 8h1v1h-1zM0 10h1v1h-1zM8 10h1v1h-1zM16 10h1v1h-1zM24 10h1v1h-1zM0 12h1v1h-1zM8 12h1v1h-1zM16 12h1v1h-1zM24 12h1v1h-1zM0 14h1v1h-1zM8 14h1v1h-1zM16 14h1v1h-1zM24 14h1v1h-1zM0 16h1v1h-1zM2 16h1v1h-1zM4 16h1v1h-1zM6 16h1v1h-1zM8 16h1v1h-1zM10 16h1v1h-1zM12 16h1v1h-1zM14 16h1v1h-1zM16 16h1v1h-1zM18 16h1v1h-1zM20 16h1v1h-1zM22 16h1v1h-1zM24 16h1v1h-1zM26 16h1v1h-1zM0 18h1v1h-1zM8 18h1v1h-1zM16 18h1v1h-1zM24 18h1v1h-1z"/><path transform="translate(754.66 750.20) scale(1.1825)" d="M0 0h1v1h-1zM8 0h1v1h-1zM16 0h1v1h-1zM24 0h1v1h-1zM2 2h1v1h-1zM6 2h1v1h-1zM10 2h1v1h-1zM14 2h1v1h-1zM18 2h1v1h-1zM22 2h1v1h-1zM26 2h1v1h-1zM4 4h1v1h-1zM12 4h1v1h-1zM20 4h1v1h-1zM2 6h1v1h-1zM6 6h1v1h-1zM10 6h1v1h-1zM14 6h1v1h-1zM18 6h1v1h-1zM22 6h1v1h-1zM26 6h1v1h-1zM0 8h1v1h-1zM8 8h1v1h-1zM16 8h1v1h-1zM24 8h1v1h-1zM2 10h1v1h-1zM6 10h1v1h-1zM10 10h1v1h-1zM14 10h1v1h-1zM18 10h1v1h-1zM22 10h1v1h-1zM26 10h1v1h-1zM4 12h1v1h-1zM12 12h1v1h-1zM20 12h1v1h-1zM2 14h1v1h-1zM6 14h1v1h-1zM10 14h1v1h-1zM14 14h1v1h-1zM18 14h1v1h-1zM22 14h1v1h-1zM26 14h1v1h-1zM0 16h1v1h-1zM8 16h1v1h-1zM16 16h1v1h-1zM24 16h1v1h-1zM2 18h1v1h-1zM6 18h1v1h-1zM10 18h1v1h-1zM14 18h1v1h-1zM18 18h1v1h-1zM22 18h1v1h-1zM26 18h1v1h-1z"/><path transform="translate(794.09 750.20) scale(1.1825)" stroke="#000" stroke-width=".22" stroke-linejoin="round" d="M6 0h2v1h-2zM14 0h2v1h-2zM22 0h2v1h-2zM0 1h1v1h-1zM5 1h1v1h-1zM8 1h1v1h-1zM13 1h1v1h-1zM16 1h1v1h-1zM21 1h1v1h-1zM24 1h1v1h-1zM1 2h1v1h-1zM4 2h1v1h-1zM9 2h1v1h-1zM12 2h1v1h-1zM17 2h1v1h-1zM20 2h1v1h-1zM25 2h1v1h-1zM2 3h2v1h-2zM10 3h2v1h-2zM18 3h2v1h-2zM26 3h1v1h-1zM4 4h2v1h-2zM12 4h2v1h-2zM20 4h2v1h-2zM6 5h1v1h-1zM14 5h1v1h-1zM22 5h1v1h-1zM7 6h1v1h-1zM15 6h1v1h-1zM23 6h1v1h-1zM7 7h1v1h-1zM15 7h1v1h-1zM23 7h1v1h-1zM6 8h2v1h-2zM14 8h2v1h-2zM22 8h2v1h-2zM0 9h1v1h-1zM5 9h1v1h-1zM8 9h1v1h-1zM13 9h1v1h-1zM16 9h1v1h-1zM21 9h1v1h-1zM24 9h1v1h-1zM1 10h1v1h-1zM4 10h1v1h-1zM9 10h1v1h-1zM12 10h1v1h-1zM17 10h1v1h-1zM20 10h1v1h-1zM25 10h1v1h-1zM2 11h2v1h-2zM10 11h2v1h-2zM18 11h2v1h-2zM26 11h1v1h-1zM4 12h2v1h-2zM12 12h2v1h-2zM20 12h2v1h-2zM6 13h1v1h-1zM14 13h1v1h-1zM22 13h1v1h-1zM7 14h1v1h-1zM15 14h1v1h-1zM23 14h1v1h-1zM7 15h1v1h-1zM15 15h1v1h-1zM23 15h1v1h-1zM6 16h2v1h-2zM14 16h2v1h-2zM22 16h2v1h-2zM0 17h1v1h-1zM5 17h1v1h-1zM8 17h1v1h-1zM13 17h1v1h-1zM16 17h1v1h-1zM21 17h1v1h-1zM24 17h1v1h-1zM1 18h1v1h-1zM4 18h1v1h-1zM9 18h1v1h-1zM12 18h1v1h-1zM17 18h1v1h-1zM20 18h1v1h-1zM25 18h1v1h-1z"/><path transform="translate(833.52 750.20) scale(1.1825)" d="M0 0h27v1h-27zM1 1h2v1h-2zM5 1h2v1h-2zM9 1h2v1h-2zM13 1h2v1h-2zM17 1h2v1h-2zM21 1h2v1h-2zM25 1h2v1h-2zM0 2h27v1h-27zM0 3h1v1h-1zM3 3h2v1h-2zM7 3h2v1h-2zM11 3h2v1h-2zM15 3h2v1h-2zM19 3h2v1h-2zM23 3h2v1h-2zM0 4h27v1h-27zM1 5h2v1h-2zM5 5h2v1h-2zM9 5h2v1h-2zM13 5h2v1h-2zM17 5h2v1h-2zM21 5h2v1h-2zM25 5h2v1h-2zM0 6h27v1h-27zM0 7h1v1h-1zM3 7h2v1h-2zM7 7h2v1h-2zM11 7h2v1h-2zM15 7h2v1h-2zM19 7h2v1h-2zM23 7h2v1h-2zM0 8h27v1h-27zM1 9h2v1h-2zM5 9h2v1h-2zM9 9h2v1h-2zM13 9h2v1h-2zM17 9h2v1h-2zM21 9h2v1h-2zM25 9h2v1h-2zM0 10h27v1h-27zM0 11h1v1h-1zM3 11h2v1h-2zM7 11h2v1h-2zM11 11h2v1h-2zM15 11h2v1h-2zM19 11h2v1h-2zM23 11h2v1h-2zM0 12h27v1h-27zM1 13h2v1h-2zM5 13h2v1h-2zM9 13h2v1h-2zM13 13h2v1h-2zM17 13h2v1h-2zM21 13h2v1h-2zM25 13h2v1h-2zM0 14h27v1h-27zM0 15h1v1h-1zM3 15h2v1h-2zM7 15h2v1h-2zM11 15h2v1h-2zM15 15h2v1h-2zM19 15h2v1h-2zM23 15h2v1h-2zM0 16h27v1h-27zM1 17h2v1h-2zM5 17h2v1h-2zM9 17h2v1h-2zM13 17h2v1h-2zM17 17h2v1h-2zM21 17h2v1h-2zM25 17h2v1h-2zM0 18h27v1h-27z"/><path transform="translate(872.95 750.20) scale(1.1825)" d="M1 0h3v1h-3zM5 0h3v1h-3zM9 0h3v1h-3zM13 0h3v1h-3zM17 0h3v1h-3zM21 0h3v1h-3zM25 0h2v1h-2zM0 1h1v1h-1zM4 1h1v1h-1zM7 1h2v1h-2zM12 1h1v1h-1zM15 1h2v1h-2zM20 1h1v1h-1zM23 1h2v1h-2zM0 2h1v1h-1zM4 2h5v1h-5zM12 2h5v1h-5zM20 2h5v1h-5zM0 3h1v1h-1zM4 3h5v1h-5zM12 3h5v1h-5zM20 3h5v1h-5zM1 4h3v1h-3zM5 4h3v1h-3zM9 4h3v1h-3zM13 4h3v1h-3zM17 4h3v1h-3zM21 4h3v1h-3zM25 4h2v1h-2zM0 5h1v1h-1zM3 5h2v1h-2zM8 5h1v1h-1zM11 5h2v1h-2zM16 5h1v1h-1zM19 5h2v1h-2zM24 5h1v1h-1zM0 6h5v1h-5zM8 6h5v1h-5zM16 6h5v1h-5zM24 6h3v1h-3zM0 7h5v1h-5zM8 7h5v1h-5zM16 7h5v1h-5zM24 7h3v1h-3zM1 8h3v1h-3zM5 8h3v1h-3zM9 8h3v1h-3zM13 8h3v1h-3zM17 8h3v1h-3zM21 8h3v1h-3zM25 8h2v1h-2zM0 9h1v1h-1zM4 9h1v1h-1zM7 9h2v1h-2zM12 9h1v1h-1zM15 9h2v1h-2zM20 9h1v1h-1zM23 9h2v1h-2zM0 10h1v1h-1zM4 10h5v1h-5zM12 10h5v1h-5zM20 10h5v1h-5zM0 11h1v1h-1zM4 11h5v1h-5zM12 11h5v1h-5zM20 11h5v1h-5zM1 12h3v1h-3zM5 12h3v1h-3zM9 12h3v1h-3zM13 12h3v1h-3zM17 12h3v1h-3zM21 12h3v1h-3zM25 12h2v1h-2zM0 13h1v1h-1zM3 13h2v1h-2zM8 13h1v1h-1zM11 13h2v1h-2zM16 13h1v1h-1zM19 13h2v1h-2zM24 13h1v1h-1zM0 14h5v1h-5zM8 14h5v1h-5zM16 14h5v1h-5zM24 14h3v1h-3zM0 15h5v1h-5zM8 15h5v1h-5zM16 15h5v1h-5zM24 15h3v1h-3zM1 16h3v1h-3zM5 16h3v1h-3zM9 16h3v1h-3zM13 16h3v1h-3zM17 16h3v1h-3zM21 16h3v1h-3zM25 16h2v1h-2zM0 17h1v1h-1zM4 17h1v1h-1zM7 17h2v1h-2zM12 17h1v1h-1zM15 17h2v1h-2zM20 17h1v1h-1zM23 17h2v1h-2zM0 18h1v1h-1zM4 18h5v1h-5zM12 18h5v1h-5zM20 18h5v1h-5z"/></g></svg>
</div>
</body>
</html>
